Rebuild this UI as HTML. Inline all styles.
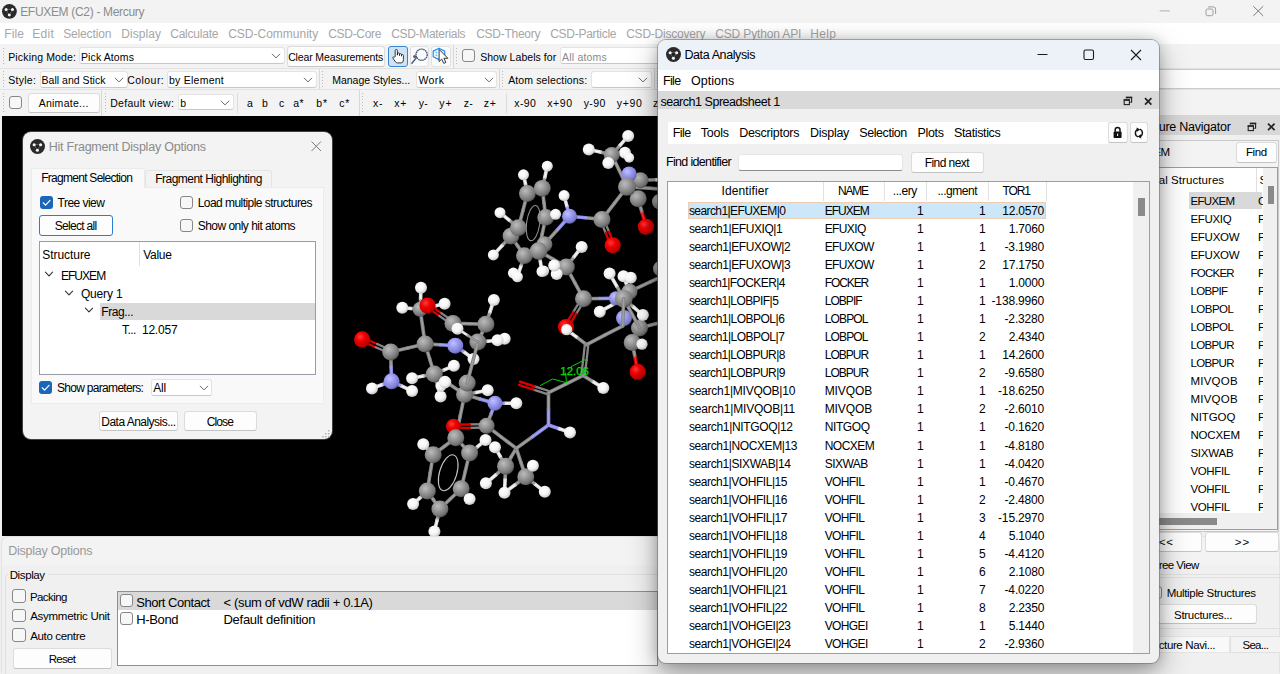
<!DOCTYPE html>
<html><head><meta charset="utf-8"><title>Mercury</title>
<style>
html,body{margin:0;padding:0;}
body{width:1280px;height:674px;overflow:hidden;position:relative;background:#f0f0f0;font-family:"Liberation Sans",sans-serif;font-size:12px;}
.a{position:absolute;}
.t{position:absolute;white-space:pre;line-height:16px;height:16px;}
svg{overflow:visible;}
</style></head><body>
<div class="a" style="left:0px;top:0px;width:1280px;height:23px;background:#f3f3f3;"></div>
<svg class="a" style="left:2.049999999999999px;top:3.8499999999999996px;" width="14.8" height="14.8" viewBox="0 0 14.8 14.8"><circle cx="7.4" cy="7.4" r="7.4" fill="#2a2a2a"/><path d="M4.10 5.60 L10.50 5.60 L7.30 11.10 Z" fill="#1c1c1c" stroke="#8a8a8a" stroke-width="0.55"/><circle cx="4.10" cy="5.60" r="1.50" fill="#f6f6f6"/><circle cx="10.50" cy="5.60" r="1.50" fill="#f6f6f6"/><circle cx="7.30" cy="11.10" r="1.50" fill="#f6f6f6"/></svg>
<span class="t" style="left:20.20px;top:4.00px;font-size:12px;letter-spacing:-0.317px;color:#8c8c8c;">EFUXEM (C2) - Mercury</span>
<svg class="a" style="left:1159px;top:0px;" width="110" height="20" viewBox="0 0 110 20"><path d="M0.7 10.9 H10.7" stroke="#b0b0b0" stroke-width="1" fill="none"/>
<rect x="47" y="9" width="7" height="6.7" rx="1.6" fill="none" stroke="#9c9c9c" stroke-width="1"/>
<path d="M49 6.9 H54.4 a2.2 2.2 0 0 1 2.2 2.2 V14" fill="none" stroke="#9c9c9c" stroke-width="1"/>
<path d="M94.3 6.2 L104.2 15.9 M104.2 6.2 L94.3 15.9" stroke="#7a7a7a" stroke-width="1" fill="none"/></svg>
<div class="a" style="left:0px;top:23px;width:1280px;height:21px;background:#ffffff;"></div>
<span class="t" style="left:4.20px;top:26.00px;font-size:12px;letter-spacing:0.166px;color:#a6a6a6;">File</span>
<span class="t" style="left:32.20px;top:26.00px;font-size:12px;letter-spacing:0.331px;color:#a6a6a6;">Edit</span>
<span class="t" style="left:63.20px;top:26.00px;font-size:12px;letter-spacing:-0.151px;color:#a6a6a6;">Selection</span>
<span class="t" style="left:121.20px;top:26.00px;font-size:12px;letter-spacing:0.094px;color:#a6a6a6;">Display</span>
<span class="t" style="left:170.20px;top:26.00px;font-size:12px;letter-spacing:-0.225px;color:#a6a6a6;">Calculate</span>
<span class="t" style="left:228.20px;top:26.00px;font-size:12px;letter-spacing:-0.001px;color:#a6a6a6;">CSD-Community</span>
<span class="t" style="left:328.20px;top:26.00px;font-size:12px;letter-spacing:-0.293px;color:#a6a6a6;">CSD-Core</span>
<span class="t" style="left:391.20px;top:26.00px;font-size:12px;letter-spacing:-0.308px;color:#a6a6a6;">CSD-Materials</span>
<span class="t" style="left:476.20px;top:26.00px;font-size:12px;letter-spacing:-0.268px;color:#a6a6a6;">CSD-Theory</span>
<span class="t" style="left:550.20px;top:26.00px;font-size:12px;letter-spacing:-0.279px;color:#a6a6a6;">CSD-Particle</span>
<span class="t" style="left:626.20px;top:26.00px;font-size:12px;letter-spacing:-0.231px;color:#a6a6a6;">CSD-Discovery</span>
<span class="t" style="left:715.20px;top:26.00px;font-size:12px;letter-spacing:-0.146px;color:#a6a6a6;">CSD Python API</span>
<span class="t" style="left:810.20px;top:26.00px;font-size:12px;letter-spacing:0.330px;color:#a6a6a6;">Help</span>
<div class="a" style="left:0px;top:44px;width:1280px;height:72px;background:#f3f3f3;"></div>
<div class="a" style="left:0px;top:68px;width:1280px;height:1px;background:#e2e2e2;"></div>
<div class="a" style="left:0px;top:89px;width:1280px;height:1px;background:#e2e2e2;"></div>
<div class="a" style="left:3px;top:48px;width:1px;height:17px;background:repeating-linear-gradient(to bottom,#b9b9b9 0,#b9b9b9 1px,transparent 1px,transparent 3px);"></div>
<span class="t" style="left:8.20px;top:49.00px;font-size:10.5px;letter-spacing:0.158px;color:#000;">Picking Mode:</span>
<div class="a" style="left:79px;top:47.3px;width:205.7px;height:16.3px;background:#fff;border:1px solid #e3e3e3;border-radius:3px;box-sizing:border-box;border-bottom-color:#c8c8c8;"></div>
<span class="t" style="left:81.00px;top:49.00px;font-size:10.5px;letter-spacing:0.107px;color:#000;">Pick Atoms</span>
<svg class="a" style="left:270.0px;top:50.949999999999996px;" width="12" height="10" viewBox="0 0 12 10"><path d="M2.2 3.1 L6 6.9 L9.8 3.1" fill="none" stroke="#666" stroke-width="1" stroke-linecap="round" stroke-linejoin="round"/></svg>
<div class="a" style="left:286.5px;top:45.5px;width:98.5px;height:21px;background:#fdfdfd;border:1px solid #dcdcdc;border-radius:3px;box-sizing:border-box;border-bottom-color:#c4c4c4;"></div>
<span class="t" style="left:288.18px;top:49.00px;font-size:10.5px;letter-spacing:-0.136px;color:#000;">Clear Measurements</span>
<div class="a" style="left:388px;top:46px;width:20px;height:21px;background:#cfe3f7;border:1px solid #3c86d0;border-radius:3px;box-sizing:border-box;"></div>
<svg class="a" style="left:388px;top:46px;" width="20" height="21" viewBox="0 0 20 21"><path transform="translate(0,-0.8)" d="M7.2 11.5 V5.4 a1.1 1.1 0 0 1 2.2 0 V10 V8.8 a1.05 1.05 0 0 1 2.1 0 V10.4 V9.5 a1 1 0 0 1 2 0 V11 V10.3 a0.95 0.95 0 0 1 1.9 0 V14.5 c0 2 -1 3.2 -2.4 3.2 H9.6 c-1.2 0 -2 -0.7 -2.7 -1.8 L4.9 12.9 c-0.5 -0.9 0.6 -1.7 1.3 -0.9 Z" fill="#ffffff" stroke="#222" stroke-width="0.9" stroke-linejoin="round"/></svg>
<div class="a" style="left:410px;top:46px;width:19px;height:21px;background:#fbfbfb;border:1px solid #e0e0e0;border-radius:3px;box-sizing:border-box;"></div>
<svg class="a" style="left:410px;top:46px;" width="19" height="21" viewBox="0 0 19 21"><circle cx="11.6" cy="8.7" r="5.6" fill="none" stroke="#4e5c7c" stroke-width="1.4" stroke-dasharray="1.6 0.5"/><path d="M6.6 11.4 L1.9 17.2" stroke="#4e5c7c" stroke-width="1.5" stroke-linecap="round"/><circle cx="4.6" cy="10.6" r="1.5" fill="#4e5c7c"/></svg>
<div class="a" style="left:431px;top:46px;width:20px;height:21px;background:#fbfbfb;border:1px solid #e0e0e0;border-radius:3px;box-sizing:border-box;"></div>
<svg class="a" style="left:431px;top:46px;" width="20" height="21" viewBox="0 0 20 21"><path d="M8 2.3 L13.7 5.1 V10.8 L8 13.6 L2.2 10.8 V5.1 Z" fill="#eef6fd" stroke="#1e8ffa" stroke-width="1.2" stroke-linejoin="round"/><path d="M4.6 6.4 h1.6 M4.6 9.2 h1.6" stroke="#1e8ffa" stroke-width="0.8"/><path d="M8.1 3.4 V15.6 L10.7 13.1 L12.8 17.4 L14.9 16.4 L12.9 12.3 L16.9 12.3 Z" fill="#fff" stroke="#222" stroke-width="0.9" stroke-linejoin="round"/></svg>
<div class="a" style="left:456px;top:48px;width:1px;height:17px;background:repeating-linear-gradient(to bottom,#b9b9b9 0,#b9b9b9 1px,transparent 1px,transparent 3px);"></div>
<div class="a" style="left:462px;top:49px;width:13px;height:13px;background:#f7f7f7;border:1px solid #878787;border-radius:3px;box-sizing:border-box;"></div>
<span class="t" style="left:480.20px;top:49.00px;font-size:10.5px;letter-spacing:0.047px;color:#000;">Show Labels for</span>
<div class="a" style="left:560px;top:47.3px;width:110px;height:16.3px;background:#fff;border:1px solid #e3e3e3;border-radius:3px;box-sizing:border-box;border-bottom-color:#c8c8c8;"></div>
<span class="t" style="left:562.00px;top:49.00px;font-size:10.5px;letter-spacing:0.202px;color:#8a8a8a;">All atoms</span>
<div class="a" style="left:3px;top:71px;width:1px;height:16px;background:repeating-linear-gradient(to bottom,#b9b9b9 0,#b9b9b9 1px,transparent 1px,transparent 3px);"></div>
<span class="t" style="left:8.20px;top:72.00px;font-size:10.5px;letter-spacing:0.290px;color:#000;">Style:</span>
<div class="a" style="left:39.5px;top:71.3px;width:88px;height:16.4px;background:#fff;border:1px solid #e3e3e3;border-radius:3px;box-sizing:border-box;border-bottom-color:#c8c8c8;"></div>
<span class="t" style="left:41.50px;top:72.00px;font-size:10.5px;letter-spacing:0.028px;color:#000;">Ball and Stick</span>
<svg class="a" style="left:112.8px;top:75.0px;" width="12" height="10" viewBox="0 0 12 10"><path d="M2.2 3.1 L6 6.9 L9.8 3.1" fill="none" stroke="#666" stroke-width="1" stroke-linecap="round" stroke-linejoin="round"/></svg>
<span class="t" style="left:127.20px;top:72.00px;font-size:10.5px;letter-spacing:0.451px;color:#000;">Colour:</span>
<div class="a" style="left:167px;top:71.3px;width:150px;height:16.4px;background:#fff;border:1px solid #e3e3e3;border-radius:3px;box-sizing:border-box;border-bottom-color:#c8c8c8;"></div>
<span class="t" style="left:169.00px;top:72.00px;font-size:10.5px;letter-spacing:0.248px;color:#000;">by Element</span>
<svg class="a" style="left:302.3px;top:75.0px;" width="12" height="10" viewBox="0 0 12 10"><path d="M2.2 3.1 L6 6.9 L9.8 3.1" fill="none" stroke="#666" stroke-width="1" stroke-linecap="round" stroke-linejoin="round"/></svg>
<div class="a" style="left:322px;top:71px;width:1px;height:16px;background:repeating-linear-gradient(to bottom,#b9b9b9 0,#b9b9b9 1px,transparent 1px,transparent 3px);"></div>
<span class="t" style="left:332.20px;top:72.00px;font-size:10.5px;letter-spacing:-0.013px;color:#000;">Manage Styles...</span>
<div class="a" style="left:416.4px;top:71.3px;width:81px;height:16.4px;background:#fff;border:1px solid #e3e3e3;border-radius:3px;box-sizing:border-box;border-bottom-color:#c8c8c8;"></div>
<span class="t" style="left:418.40px;top:72.00px;font-size:10.5px;letter-spacing:0.424px;color:#000;">Work</span>
<svg class="a" style="left:482.7px;top:75.0px;" width="12" height="10" viewBox="0 0 12 10"><path d="M2.2 3.1 L6 6.9 L9.8 3.1" fill="none" stroke="#666" stroke-width="1" stroke-linecap="round" stroke-linejoin="round"/></svg>
<div class="a" style="left:502px;top:71px;width:1px;height:16px;background:repeating-linear-gradient(to bottom,#b9b9b9 0,#b9b9b9 1px,transparent 1px,transparent 3px);"></div>
<span class="t" style="left:508.20px;top:72.00px;font-size:10.5px;letter-spacing:0.123px;color:#000;">Atom selections:</span>
<div class="a" style="left:591px;top:71.3px;width:60.5px;height:16.4px;background:#fff;border:1px solid #e3e3e3;border-radius:3px;box-sizing:border-box;border-bottom-color:#c8c8c8;"></div>
<svg class="a" style="left:636.8px;top:75.0px;" width="12" height="10" viewBox="0 0 12 10"><path d="M2.2 3.1 L6 6.9 L9.8 3.1" fill="none" stroke="#666" stroke-width="1" stroke-linecap="round" stroke-linejoin="round"/></svg>
<div class="a" style="left:657px;top:71px;width:1px;height:16px;background:repeating-linear-gradient(to bottom,#b9b9b9 0,#b9b9b9 1px,transparent 1px,transparent 3px);"></div>
<div class="a" style="left:3px;top:93px;width:1px;height:19px;background:repeating-linear-gradient(to bottom,#b9b9b9 0,#b9b9b9 1px,transparent 1px,transparent 3px);"></div>
<div class="a" style="left:9px;top:96px;width:13px;height:13px;background:#f7f7f7;border:1px solid #878787;border-radius:3px;box-sizing:border-box;"></div>
<div class="a" style="left:27.5px;top:93px;width:72px;height:20.2px;background:#fdfdfd;border:1px solid #dcdcdc;border-radius:3px;box-sizing:border-box;border-bottom-color:#c4c4c4;"></div>
<span class="t" style="left:38.64px;top:95.00px;font-size:10.5px;letter-spacing:0.273px;color:#000;">Animate...</span>
<div class="a" style="left:105px;top:93px;width:1px;height:19px;background:repeating-linear-gradient(to bottom,#b9b9b9 0,#b9b9b9 1px,transparent 1px,transparent 3px);"></div>
<span class="t" style="left:110.20px;top:95.00px;font-size:10.5px;letter-spacing:0.300px;color:#000;">Default view:</span>
<div class="a" style="left:177.5px;top:94.3px;width:56px;height:16.2px;background:#fff;border:1px solid #e3e3e3;border-radius:3px;box-sizing:border-box;border-bottom-color:#c8c8c8;"></div>
<span class="t" style="left:180.30px;top:95.00px;font-size:10.5px;letter-spacing:-0.100px;color:#000;">b</span>
<svg class="a" style="left:218.8px;top:97.89999999999999px;" width="12" height="10" viewBox="0 0 12 10"><path d="M2.2 3.1 L6 6.9 L9.8 3.1" fill="none" stroke="#666" stroke-width="1" stroke-linecap="round" stroke-linejoin="round"/></svg>
<div class="a" style="left:237px;top:93px;width:1px;height:20px;background:#dcdcdc;"></div>
<span class="t" style="left:247.00px;top:95.00px;font-size:10.5px;letter-spacing:-0.100px;color:#000;">a</span>
<span class="t" style="left:262.00px;top:95.00px;font-size:10.5px;letter-spacing:-0.100px;color:#000;">b</span>
<span class="t" style="left:279.00px;top:95.00px;font-size:10.5px;letter-spacing:-0.100px;color:#000;">c</span>
<span class="t" style="left:293.20px;top:95.00px;font-size:10.5px;letter-spacing:0.537px;color:#000;">a*</span>
<span class="t" style="left:316.20px;top:95.00px;font-size:10.5px;letter-spacing:1.037px;color:#000;">b*</span>
<span class="t" style="left:339.20px;top:95.00px;font-size:10.5px;letter-spacing:0.832px;color:#000;">c*</span>
<div class="a" style="left:362px;top:93px;width:1px;height:19px;background:repeating-linear-gradient(to bottom,#b9b9b9 0,#b9b9b9 1px,transparent 1px,transparent 3px);"></div>
<span class="t" style="left:372.90px;top:95.00px;font-size:10.5px;letter-spacing:0.777px;color:#000;">x-</span>
<span class="t" style="left:394.20px;top:95.00px;font-size:10.5px;letter-spacing:0.809px;color:#000;">x+</span>
<span class="t" style="left:418.70px;top:95.00px;font-size:10.5px;letter-spacing:0.377px;color:#000;">y-</span>
<span class="t" style="left:439.20px;top:95.00px;font-size:10.5px;letter-spacing:1.059px;color:#000;">y+</span>
<span class="t" style="left:463.70px;top:95.00px;font-size:10.5px;letter-spacing:0.377px;color:#000;">z-</span>
<span class="t" style="left:483.70px;top:95.00px;font-size:10.5px;letter-spacing:0.909px;color:#000;">z+</span>
<div class="a" style="left:506px;top:93px;width:1px;height:20px;background:#dcdcdc;"></div>
<span class="t" style="left:514.20px;top:95.00px;font-size:10.5px;letter-spacing:0.444px;color:#000;">x-90</span>
<span class="t" style="left:547.20px;top:95.00px;font-size:10.5px;letter-spacing:0.610px;color:#000;">x+90</span>
<span class="t" style="left:583.70px;top:95.00px;font-size:10.5px;letter-spacing:0.394px;color:#000;">y-90</span>
<span class="t" style="left:616.70px;top:95.00px;font-size:10.5px;letter-spacing:0.735px;color:#000;">y+90</span>
<span class="t" style="left:652.90px;top:95.00px;font-size:10.5px;letter-spacing:0.394px;color:#000;">z-90</span>
<div class="a" style="left:452.5px;top:45px;width:1px;height:23px;background:#d8d8d8;"></div>
<div class="a" style="left:318.5px;top:69px;width:1px;height:20px;background:#d8d8d8;"></div>
<div class="a" style="left:499px;top:69px;width:1px;height:20px;background:#d8d8d8;"></div>
<div class="a" style="left:653.5px;top:69px;width:1px;height:20px;background:#d8d8d8;"></div>
<div class="a" style="left:101.3px;top:90px;width:1px;height:26px;background:#d8d8d8;"></div>
<div class="a" style="left:359.3px;top:90px;width:1px;height:26px;background:#d8d8d8;"></div>
<div class="a" style="left:1.5px;top:116px;width:656px;height:420px;background:#000;"></div>
<svg class="a" style="left:0;top:0" width="1280" height="674" viewBox="0 0 1280 674"><defs>
<radialGradient id="gC" cx="38%" cy="34%" r="70%"><stop offset="0" stop-color="#bcbcbc"/><stop offset="0.4" stop-color="#999999"/><stop offset="0.82" stop-color="#727272"/><stop offset="1" stop-color="#484848"/></radialGradient>
<radialGradient id="gH" cx="40%" cy="36%" r="70%"><stop offset="0" stop-color="#ffffff"/><stop offset="0.55" stop-color="#f4f4f4"/><stop offset="0.85" stop-color="#d0d0d0"/><stop offset="1" stop-color="#a0a0a0"/></radialGradient>
<radialGradient id="gN" cx="38%" cy="34%" r="70%"><stop offset="0" stop-color="#c2c2ff"/><stop offset="0.4" stop-color="#9c9cf4"/><stop offset="0.85" stop-color="#7a7acc"/><stop offset="1" stop-color="#525290"/></radialGradient>
<radialGradient id="gO" cx="38%" cy="34%" r="70%"><stop offset="0" stop-color="#ff3a3a"/><stop offset="0.4" stop-color="#f00000"/><stop offset="0.85" stop-color="#c00000"/><stop offset="1" stop-color="#800000"/></radialGradient>
<clipPath id="vp"><rect x="2" y="116" width="655.5" height="420"/></clipPath>
</defs><g clip-path="url(#vp)"><g transform="translate(0,0.7)"><line x1="390.7" y1="351.2" x2="407.9" y2="347.2" stroke="#858585" stroke-width="3.6" stroke-linecap="round"/><line x1="407.9" y1="347.2" x2="425.1" y2="343.2" stroke="#858585" stroke-width="3.6" stroke-linecap="round"/><line x1="390.7" y1="351.2" x2="407.9" y2="347.2" stroke="#a2a2a2" stroke-width="1.368" stroke-linecap="round"/><line x1="407.9" y1="347.2" x2="425.1" y2="343.2" stroke="#a2a2a2" stroke-width="1.368" stroke-linecap="round"/><line x1="390.7" y1="351.2" x2="391.1" y2="365.9" stroke="#858585" stroke-width="3.6" stroke-linecap="round"/><line x1="391.1" y1="365.9" x2="391.6" y2="380.6" stroke="#8a8ae2" stroke-width="3.6" stroke-linecap="round"/><line x1="390.7" y1="351.2" x2="391.1" y2="365.9" stroke="#a2a2a2" stroke-width="1.368" stroke-linecap="round"/><line x1="391.1" y1="365.9" x2="391.6" y2="380.6" stroke="#a4a4f6" stroke-width="1.368" stroke-linecap="round"/><line x1="391.6" y1="380.6" x2="381.8" y2="384.1" stroke="#8a8ae2" stroke-width="3.6" stroke-linecap="round"/><line x1="381.8" y1="384.1" x2="372.0" y2="387.7" stroke="#dcdcdc" stroke-width="3.6" stroke-linecap="round"/><line x1="391.6" y1="380.6" x2="381.8" y2="384.1" stroke="#a4a4f6" stroke-width="1.368" stroke-linecap="round"/><line x1="381.8" y1="384.1" x2="372.0" y2="387.7" stroke="#f6f6f6" stroke-width="1.368" stroke-linecap="round"/><line x1="391.6" y1="380.6" x2="401.9" y2="385.5" stroke="#8a8ae2" stroke-width="3.6" stroke-linecap="round"/><line x1="401.9" y1="385.5" x2="412.1" y2="390.3" stroke="#dcdcdc" stroke-width="3.6" stroke-linecap="round"/><line x1="391.6" y1="380.6" x2="401.9" y2="385.5" stroke="#a4a4f6" stroke-width="1.368" stroke-linecap="round"/><line x1="401.9" y1="385.5" x2="412.1" y2="390.3" stroke="#f6f6f6" stroke-width="1.368" stroke-linecap="round"/><line x1="425.1" y1="343.2" x2="422.6" y2="325.9" stroke="#858585" stroke-width="3.6" stroke-linecap="round"/><line x1="422.6" y1="325.9" x2="420.1" y2="308.5" stroke="#858585" stroke-width="3.6" stroke-linecap="round"/><line x1="425.1" y1="343.2" x2="422.6" y2="325.9" stroke="#a2a2a2" stroke-width="1.368" stroke-linecap="round"/><line x1="422.6" y1="325.9" x2="420.1" y2="308.5" stroke="#a2a2a2" stroke-width="1.368" stroke-linecap="round"/><line x1="420.1" y1="308.5" x2="420.6" y2="297.8" stroke="#858585" stroke-width="3.6" stroke-linecap="round"/><line x1="420.6" y1="297.8" x2="421.0" y2="287.1" stroke="#dcdcdc" stroke-width="3.6" stroke-linecap="round"/><line x1="420.1" y1="308.5" x2="420.6" y2="297.8" stroke="#a2a2a2" stroke-width="1.368" stroke-linecap="round"/><line x1="420.6" y1="297.8" x2="421.0" y2="287.1" stroke="#f6f6f6" stroke-width="1.368" stroke-linecap="round"/><line x1="420.1" y1="308.5" x2="411.2" y2="307.8" stroke="#858585" stroke-width="3.6" stroke-linecap="round"/><line x1="411.2" y1="307.8" x2="402.3" y2="307.1" stroke="#dcdcdc" stroke-width="3.6" stroke-linecap="round"/><line x1="420.1" y1="308.5" x2="411.2" y2="307.8" stroke="#a2a2a2" stroke-width="1.368" stroke-linecap="round"/><line x1="411.2" y1="307.8" x2="402.3" y2="307.1" stroke="#f6f6f6" stroke-width="1.368" stroke-linecap="round"/><line x1="420.1" y1="308.5" x2="432.4" y2="305.8" stroke="#858585" stroke-width="3.6" stroke-linecap="round"/><line x1="432.4" y1="305.8" x2="444.6" y2="303.1" stroke="#dcdcdc" stroke-width="3.6" stroke-linecap="round"/><line x1="420.1" y1="308.5" x2="432.4" y2="305.8" stroke="#a2a2a2" stroke-width="1.368" stroke-linecap="round"/><line x1="432.4" y1="305.8" x2="444.6" y2="303.1" stroke="#f6f6f6" stroke-width="1.368" stroke-linecap="round"/><line x1="425.1" y1="343.2" x2="440.2" y2="344.1" stroke="#858585" stroke-width="3.6" stroke-linecap="round"/><line x1="440.2" y1="344.1" x2="455.3" y2="345.0" stroke="#8a8ae2" stroke-width="3.6" stroke-linecap="round"/><line x1="425.1" y1="343.2" x2="440.2" y2="344.1" stroke="#a2a2a2" stroke-width="1.368" stroke-linecap="round"/><line x1="440.2" y1="344.1" x2="455.3" y2="345.0" stroke="#a4a4f6" stroke-width="1.368" stroke-linecap="round"/><line x1="425.1" y1="343.2" x2="429.7" y2="358.3" stroke="#858585" stroke-width="3.6" stroke-linecap="round"/><line x1="429.7" y1="358.3" x2="434.3" y2="373.4" stroke="#858585" stroke-width="3.6" stroke-linecap="round"/><line x1="425.1" y1="343.2" x2="429.7" y2="358.3" stroke="#a2a2a2" stroke-width="1.368" stroke-linecap="round"/><line x1="429.7" y1="358.3" x2="434.3" y2="373.4" stroke="#a2a2a2" stroke-width="1.368" stroke-linecap="round"/><line x1="434.3" y1="373.4" x2="444.1" y2="369.2" stroke="#858585" stroke-width="3.6" stroke-linecap="round"/><line x1="444.1" y1="369.2" x2="453.9" y2="365.1" stroke="#dcdcdc" stroke-width="3.6" stroke-linecap="round"/><line x1="434.3" y1="373.4" x2="444.1" y2="369.2" stroke="#a2a2a2" stroke-width="1.368" stroke-linecap="round"/><line x1="444.1" y1="369.2" x2="453.9" y2="365.1" stroke="#f6f6f6" stroke-width="1.368" stroke-linecap="round"/><line x1="434.3" y1="373.4" x2="423.2" y2="375.4" stroke="#858585" stroke-width="3.6" stroke-linecap="round"/><line x1="423.2" y1="375.4" x2="412.1" y2="377.5" stroke="#dcdcdc" stroke-width="3.6" stroke-linecap="round"/><line x1="434.3" y1="373.4" x2="423.2" y2="375.4" stroke="#a2a2a2" stroke-width="1.368" stroke-linecap="round"/><line x1="423.2" y1="375.4" x2="412.1" y2="377.5" stroke="#f6f6f6" stroke-width="1.368" stroke-linecap="round"/><line x1="434.3" y1="373.4" x2="437.5" y2="384.5" stroke="#858585" stroke-width="3.6" stroke-linecap="round"/><line x1="437.5" y1="384.5" x2="440.6" y2="395.7" stroke="#dcdcdc" stroke-width="3.6" stroke-linecap="round"/><line x1="434.3" y1="373.4" x2="437.5" y2="384.5" stroke="#a2a2a2" stroke-width="1.368" stroke-linecap="round"/><line x1="437.5" y1="384.5" x2="440.6" y2="395.7" stroke="#f6f6f6" stroke-width="1.368" stroke-linecap="round"/><line x1="453.0" y1="322.7" x2="469.4" y2="323.1" stroke="#858585" stroke-width="3.6" stroke-linecap="round"/><line x1="469.4" y1="323.1" x2="485.9" y2="323.6" stroke="#858585" stroke-width="3.6" stroke-linecap="round"/><line x1="453.0" y1="322.7" x2="469.4" y2="323.1" stroke="#a2a2a2" stroke-width="1.368" stroke-linecap="round"/><line x1="469.4" y1="323.1" x2="485.9" y2="323.6" stroke="#a2a2a2" stroke-width="1.368" stroke-linecap="round"/><line x1="485.9" y1="323.6" x2="489.9" y2="311.4" stroke="#858585" stroke-width="3.6" stroke-linecap="round"/><line x1="489.9" y1="311.4" x2="493.9" y2="299.2" stroke="#dcdcdc" stroke-width="3.6" stroke-linecap="round"/><line x1="485.9" y1="323.6" x2="489.9" y2="311.4" stroke="#a2a2a2" stroke-width="1.368" stroke-linecap="round"/><line x1="489.9" y1="311.4" x2="493.9" y2="299.2" stroke="#f6f6f6" stroke-width="1.368" stroke-linecap="round"/><line x1="485.9" y1="323.6" x2="481.9" y2="332.5" stroke="#858585" stroke-width="3.6" stroke-linecap="round"/><line x1="481.9" y1="332.5" x2="477.9" y2="341.4" stroke="#858585" stroke-width="3.6" stroke-linecap="round"/><line x1="485.9" y1="323.6" x2="481.9" y2="332.5" stroke="#a2a2a2" stroke-width="1.368" stroke-linecap="round"/><line x1="481.9" y1="332.5" x2="477.9" y2="341.4" stroke="#a2a2a2" stroke-width="1.368" stroke-linecap="round"/><line x1="477.9" y1="341.4" x2="487.7" y2="340.5" stroke="#858585" stroke-width="3.6" stroke-linecap="round"/><line x1="487.7" y1="340.5" x2="497.5" y2="339.6" stroke="#dcdcdc" stroke-width="3.6" stroke-linecap="round"/><line x1="477.9" y1="341.4" x2="487.7" y2="340.5" stroke="#a2a2a2" stroke-width="1.368" stroke-linecap="round"/><line x1="487.7" y1="340.5" x2="497.5" y2="339.6" stroke="#f6f6f6" stroke-width="1.368" stroke-linecap="round"/><line x1="455.3" y1="345.0" x2="464.4" y2="351.6" stroke="#8a8ae2" stroke-width="3.6" stroke-linecap="round"/><line x1="464.4" y1="351.6" x2="473.5" y2="358.3" stroke="#dcdcdc" stroke-width="3.6" stroke-linecap="round"/><line x1="455.3" y1="345.0" x2="464.4" y2="351.6" stroke="#a4a4f6" stroke-width="1.368" stroke-linecap="round"/><line x1="464.4" y1="351.6" x2="473.5" y2="358.3" stroke="#f6f6f6" stroke-width="1.368" stroke-linecap="round"/><line x1="467.2" y1="382.3" x2="465.9" y2="388.1" stroke="#858585" stroke-width="3.6" stroke-linecap="round"/><line x1="465.9" y1="388.1" x2="464.6" y2="393.9" stroke="#858585" stroke-width="3.6" stroke-linecap="round"/><line x1="467.2" y1="382.3" x2="465.9" y2="388.1" stroke="#a2a2a2" stroke-width="1.368" stroke-linecap="round"/><line x1="465.9" y1="388.1" x2="464.6" y2="393.9" stroke="#a2a2a2" stroke-width="1.368" stroke-linecap="round"/><line x1="464.6" y1="393.9" x2="476.1" y2="391.7" stroke="#858585" stroke-width="3.6" stroke-linecap="round"/><line x1="476.1" y1="391.7" x2="487.7" y2="389.5" stroke="#dcdcdc" stroke-width="3.6" stroke-linecap="round"/><line x1="464.6" y1="393.9" x2="476.1" y2="391.7" stroke="#a2a2a2" stroke-width="1.368" stroke-linecap="round"/><line x1="476.1" y1="391.7" x2="487.7" y2="389.5" stroke="#f6f6f6" stroke-width="1.368" stroke-linecap="round"/><line x1="464.6" y1="393.9" x2="479.8" y2="398.2" stroke="#858585" stroke-width="3.6" stroke-linecap="round"/><line x1="479.8" y1="398.2" x2="495.0" y2="402.6" stroke="#8a8ae2" stroke-width="3.6" stroke-linecap="round"/><line x1="464.6" y1="393.9" x2="479.8" y2="398.2" stroke="#a2a2a2" stroke-width="1.368" stroke-linecap="round"/><line x1="479.8" y1="398.2" x2="495.0" y2="402.6" stroke="#a4a4f6" stroke-width="1.368" stroke-linecap="round"/><line x1="495.0" y1="402.6" x2="505.6" y2="402.6" stroke="#8a8ae2" stroke-width="3.6" stroke-linecap="round"/><line x1="505.6" y1="402.6" x2="516.3" y2="402.6" stroke="#dcdcdc" stroke-width="3.6" stroke-linecap="round"/><line x1="495.0" y1="402.6" x2="505.6" y2="402.6" stroke="#a4a4f6" stroke-width="1.368" stroke-linecap="round"/><line x1="505.6" y1="402.6" x2="516.3" y2="402.6" stroke="#f6f6f6" stroke-width="1.368" stroke-linecap="round"/><line x1="495.0" y1="402.6" x2="490.8" y2="413.9" stroke="#8a8ae2" stroke-width="3.6" stroke-linecap="round"/><line x1="490.8" y1="413.9" x2="486.6" y2="425.1" stroke="#858585" stroke-width="3.6" stroke-linecap="round"/><line x1="495.0" y1="402.6" x2="490.8" y2="413.9" stroke="#a4a4f6" stroke-width="1.368" stroke-linecap="round"/><line x1="490.8" y1="413.9" x2="486.6" y2="425.1" stroke="#a2a2a2" stroke-width="1.368" stroke-linecap="round"/><line x1="486.6" y1="425.1" x2="501.4" y2="436.4" stroke="#858585" stroke-width="3.6" stroke-linecap="round"/><line x1="501.4" y1="436.4" x2="516.3" y2="447.7" stroke="#858585" stroke-width="3.6" stroke-linecap="round"/><line x1="486.6" y1="425.1" x2="501.4" y2="436.4" stroke="#a2a2a2" stroke-width="1.368" stroke-linecap="round"/><line x1="501.4" y1="436.4" x2="516.3" y2="447.7" stroke="#a2a2a2" stroke-width="1.368" stroke-linecap="round"/><line x1="464.6" y1="393.9" x2="460.2" y2="415.4" stroke="#858585" stroke-width="3.6" stroke-linecap="round"/><line x1="460.2" y1="415.4" x2="455.8" y2="437.0" stroke="#858585" stroke-width="3.6" stroke-linecap="round"/><line x1="464.6" y1="393.9" x2="460.2" y2="415.4" stroke="#a2a2a2" stroke-width="1.368" stroke-linecap="round"/><line x1="460.2" y1="415.4" x2="455.8" y2="437.0" stroke="#a2a2a2" stroke-width="1.368" stroke-linecap="round"/><line x1="455.8" y1="437.0" x2="462.7" y2="444.7" stroke="#858585" stroke-width="3.6" stroke-linecap="round"/><line x1="462.7" y1="444.7" x2="469.6" y2="452.4" stroke="#858585" stroke-width="3.6" stroke-linecap="round"/><line x1="455.8" y1="437.0" x2="462.7" y2="444.7" stroke="#a2a2a2" stroke-width="1.368" stroke-linecap="round"/><line x1="462.7" y1="444.7" x2="469.6" y2="452.4" stroke="#a2a2a2" stroke-width="1.368" stroke-linecap="round"/><line x1="469.6" y1="452.4" x2="465.4" y2="470.2" stroke="#858585" stroke-width="3.6" stroke-linecap="round"/><line x1="465.4" y1="470.2" x2="461.2" y2="488.0" stroke="#858585" stroke-width="3.6" stroke-linecap="round"/><line x1="469.6" y1="452.4" x2="465.4" y2="470.2" stroke="#a2a2a2" stroke-width="1.368" stroke-linecap="round"/><line x1="465.4" y1="470.2" x2="461.2" y2="488.0" stroke="#a2a2a2" stroke-width="1.368" stroke-linecap="round"/><line x1="461.2" y1="488.0" x2="450.5" y2="498.1" stroke="#858585" stroke-width="3.6" stroke-linecap="round"/><line x1="450.5" y1="498.1" x2="439.9" y2="508.2" stroke="#858585" stroke-width="3.6" stroke-linecap="round"/><line x1="461.2" y1="488.0" x2="450.5" y2="498.1" stroke="#a2a2a2" stroke-width="1.368" stroke-linecap="round"/><line x1="450.5" y1="498.1" x2="439.9" y2="508.2" stroke="#a2a2a2" stroke-width="1.368" stroke-linecap="round"/><line x1="439.9" y1="508.2" x2="433.6" y2="499.3" stroke="#858585" stroke-width="3.6" stroke-linecap="round"/><line x1="433.6" y1="499.3" x2="427.3" y2="490.4" stroke="#858585" stroke-width="3.6" stroke-linecap="round"/><line x1="439.9" y1="508.2" x2="433.6" y2="499.3" stroke="#a2a2a2" stroke-width="1.368" stroke-linecap="round"/><line x1="433.6" y1="499.3" x2="427.3" y2="490.4" stroke="#a2a2a2" stroke-width="1.368" stroke-linecap="round"/><line x1="427.3" y1="490.4" x2="430.2" y2="472.2" stroke="#858585" stroke-width="3.6" stroke-linecap="round"/><line x1="430.2" y1="472.2" x2="433.2" y2="454.1" stroke="#858585" stroke-width="3.6" stroke-linecap="round"/><line x1="427.3" y1="490.4" x2="430.2" y2="472.2" stroke="#a2a2a2" stroke-width="1.368" stroke-linecap="round"/><line x1="430.2" y1="472.2" x2="433.2" y2="454.1" stroke="#a2a2a2" stroke-width="1.368" stroke-linecap="round"/><line x1="433.2" y1="454.1" x2="444.5" y2="445.6" stroke="#858585" stroke-width="3.6" stroke-linecap="round"/><line x1="444.5" y1="445.6" x2="455.8" y2="437.0" stroke="#858585" stroke-width="3.6" stroke-linecap="round"/><line x1="433.2" y1="454.1" x2="444.5" y2="445.6" stroke="#a2a2a2" stroke-width="1.368" stroke-linecap="round"/><line x1="444.5" y1="445.6" x2="455.8" y2="437.0" stroke="#a2a2a2" stroke-width="1.368" stroke-linecap="round"/><line x1="469.6" y1="452.4" x2="477.6" y2="445.9" stroke="#858585" stroke-width="3.6" stroke-linecap="round"/><line x1="477.6" y1="445.9" x2="485.5" y2="439.3" stroke="#dcdcdc" stroke-width="3.6" stroke-linecap="round"/><line x1="469.6" y1="452.4" x2="477.6" y2="445.9" stroke="#a2a2a2" stroke-width="1.368" stroke-linecap="round"/><line x1="477.6" y1="445.9" x2="485.5" y2="439.3" stroke="#f6f6f6" stroke-width="1.368" stroke-linecap="round"/><line x1="433.2" y1="454.1" x2="428.2" y2="448.9" stroke="#858585" stroke-width="3.6" stroke-linecap="round"/><line x1="428.2" y1="448.9" x2="423.3" y2="443.6" stroke="#dcdcdc" stroke-width="3.6" stroke-linecap="round"/><line x1="433.2" y1="454.1" x2="428.2" y2="448.9" stroke="#a2a2a2" stroke-width="1.368" stroke-linecap="round"/><line x1="428.2" y1="448.9" x2="423.3" y2="443.6" stroke="#f6f6f6" stroke-width="1.368" stroke-linecap="round"/><line x1="461.2" y1="488.0" x2="465.4" y2="493.1" stroke="#858585" stroke-width="3.6" stroke-linecap="round"/><line x1="465.4" y1="493.1" x2="469.6" y2="498.2" stroke="#dcdcdc" stroke-width="3.6" stroke-linecap="round"/><line x1="461.2" y1="488.0" x2="465.4" y2="493.1" stroke="#a2a2a2" stroke-width="1.368" stroke-linecap="round"/><line x1="465.4" y1="493.1" x2="469.6" y2="498.2" stroke="#f6f6f6" stroke-width="1.368" stroke-linecap="round"/><line x1="427.3" y1="490.4" x2="420.2" y2="496.9" stroke="#858585" stroke-width="3.6" stroke-linecap="round"/><line x1="420.2" y1="496.9" x2="413.1" y2="503.4" stroke="#dcdcdc" stroke-width="3.6" stroke-linecap="round"/><line x1="427.3" y1="490.4" x2="420.2" y2="496.9" stroke="#a2a2a2" stroke-width="1.368" stroke-linecap="round"/><line x1="420.2" y1="496.9" x2="413.1" y2="503.4" stroke="#f6f6f6" stroke-width="1.368" stroke-linecap="round"/><line x1="439.9" y1="508.2" x2="437.1" y2="519.5" stroke="#858585" stroke-width="3.6" stroke-linecap="round"/><line x1="437.1" y1="519.5" x2="434.4" y2="530.7" stroke="#dcdcdc" stroke-width="3.6" stroke-linecap="round"/><line x1="439.9" y1="508.2" x2="437.1" y2="519.5" stroke="#a2a2a2" stroke-width="1.368" stroke-linecap="round"/><line x1="437.1" y1="519.5" x2="434.4" y2="530.7" stroke="#f6f6f6" stroke-width="1.368" stroke-linecap="round"/><line x1="516.3" y1="447.7" x2="510.9" y2="456.6" stroke="#858585" stroke-width="3.6" stroke-linecap="round"/><line x1="510.9" y1="456.6" x2="505.6" y2="465.5" stroke="#858585" stroke-width="3.6" stroke-linecap="round"/><line x1="516.3" y1="447.7" x2="510.9" y2="456.6" stroke="#a2a2a2" stroke-width="1.368" stroke-linecap="round"/><line x1="510.9" y1="456.6" x2="505.6" y2="465.5" stroke="#a2a2a2" stroke-width="1.368" stroke-linecap="round"/><line x1="516.3" y1="447.7" x2="521.0" y2="461.9" stroke="#858585" stroke-width="3.6" stroke-linecap="round"/><line x1="521.0" y1="461.9" x2="525.8" y2="476.1" stroke="#858585" stroke-width="3.6" stroke-linecap="round"/><line x1="516.3" y1="447.7" x2="521.0" y2="461.9" stroke="#a2a2a2" stroke-width="1.368" stroke-linecap="round"/><line x1="521.0" y1="461.9" x2="525.8" y2="476.1" stroke="#a2a2a2" stroke-width="1.368" stroke-linecap="round"/><line x1="505.6" y1="465.5" x2="500.3" y2="456.0" stroke="#858585" stroke-width="3.6" stroke-linecap="round"/><line x1="500.3" y1="456.0" x2="495.0" y2="446.5" stroke="#dcdcdc" stroke-width="3.6" stroke-linecap="round"/><line x1="505.6" y1="465.5" x2="500.3" y2="456.0" stroke="#a2a2a2" stroke-width="1.368" stroke-linecap="round"/><line x1="500.3" y1="456.0" x2="495.0" y2="446.5" stroke="#f6f6f6" stroke-width="1.368" stroke-linecap="round"/><line x1="505.6" y1="465.5" x2="495.8" y2="474.1" stroke="#858585" stroke-width="3.6" stroke-linecap="round"/><line x1="495.8" y1="474.1" x2="485.9" y2="482.6" stroke="#dcdcdc" stroke-width="3.6" stroke-linecap="round"/><line x1="505.6" y1="465.5" x2="495.8" y2="474.1" stroke="#a2a2a2" stroke-width="1.368" stroke-linecap="round"/><line x1="495.8" y1="474.1" x2="485.9" y2="482.6" stroke="#f6f6f6" stroke-width="1.368" stroke-linecap="round"/><line x1="505.6" y1="465.5" x2="505.1" y2="478.8" stroke="#858585" stroke-width="3.6" stroke-linecap="round"/><line x1="505.1" y1="478.8" x2="504.5" y2="492.0" stroke="#dcdcdc" stroke-width="3.6" stroke-linecap="round"/><line x1="505.6" y1="465.5" x2="505.1" y2="478.8" stroke="#a2a2a2" stroke-width="1.368" stroke-linecap="round"/><line x1="505.1" y1="478.8" x2="504.5" y2="492.0" stroke="#f6f6f6" stroke-width="1.368" stroke-linecap="round"/><line x1="525.8" y1="476.1" x2="515.1" y2="484.1" stroke="#858585" stroke-width="3.6" stroke-linecap="round"/><line x1="515.1" y1="484.1" x2="504.5" y2="492.0" stroke="#dcdcdc" stroke-width="3.6" stroke-linecap="round"/><line x1="525.8" y1="476.1" x2="515.1" y2="484.1" stroke="#a2a2a2" stroke-width="1.368" stroke-linecap="round"/><line x1="515.1" y1="484.1" x2="504.5" y2="492.0" stroke="#f6f6f6" stroke-width="1.368" stroke-linecap="round"/><line x1="525.8" y1="476.1" x2="529.3" y2="470.6" stroke="#858585" stroke-width="3.6" stroke-linecap="round"/><line x1="529.3" y1="470.6" x2="532.9" y2="465.0" stroke="#dcdcdc" stroke-width="3.6" stroke-linecap="round"/><line x1="525.8" y1="476.1" x2="529.3" y2="470.6" stroke="#a2a2a2" stroke-width="1.368" stroke-linecap="round"/><line x1="529.3" y1="470.6" x2="532.9" y2="465.0" stroke="#f6f6f6" stroke-width="1.368" stroke-linecap="round"/><line x1="525.8" y1="476.1" x2="535.3" y2="483.6" stroke="#858585" stroke-width="3.6" stroke-linecap="round"/><line x1="535.3" y1="483.6" x2="544.8" y2="491.1" stroke="#dcdcdc" stroke-width="3.6" stroke-linecap="round"/><line x1="525.8" y1="476.1" x2="535.3" y2="483.6" stroke="#a2a2a2" stroke-width="1.368" stroke-linecap="round"/><line x1="535.3" y1="483.6" x2="544.8" y2="491.1" stroke="#f6f6f6" stroke-width="1.368" stroke-linecap="round"/><line x1="516.3" y1="447.7" x2="532.4" y2="436.0" stroke="#858585" stroke-width="3.6" stroke-linecap="round"/><line x1="532.4" y1="436.0" x2="548.5" y2="424.3" stroke="#8a8ae2" stroke-width="3.6" stroke-linecap="round"/><line x1="516.3" y1="447.7" x2="532.4" y2="436.0" stroke="#a2a2a2" stroke-width="1.368" stroke-linecap="round"/><line x1="532.4" y1="436.0" x2="548.5" y2="424.3" stroke="#a4a4f6" stroke-width="1.368" stroke-linecap="round"/><line x1="548.5" y1="424.3" x2="559.2" y2="428.0" stroke="#8a8ae2" stroke-width="3.6" stroke-linecap="round"/><line x1="559.2" y1="428.0" x2="570.0" y2="431.7" stroke="#dcdcdc" stroke-width="3.6" stroke-linecap="round"/><line x1="548.5" y1="424.3" x2="559.2" y2="428.0" stroke="#a4a4f6" stroke-width="1.368" stroke-linecap="round"/><line x1="559.2" y1="428.0" x2="570.0" y2="431.7" stroke="#f6f6f6" stroke-width="1.368" stroke-linecap="round"/><line x1="548.5" y1="424.3" x2="548.5" y2="408.1" stroke="#8a8ae2" stroke-width="3.6" stroke-linecap="round"/><line x1="548.5" y1="408.1" x2="548.5" y2="392.0" stroke="#858585" stroke-width="3.6" stroke-linecap="round"/><line x1="548.5" y1="424.3" x2="548.5" y2="408.1" stroke="#a4a4f6" stroke-width="1.368" stroke-linecap="round"/><line x1="548.5" y1="408.1" x2="548.5" y2="392.0" stroke="#a2a2a2" stroke-width="1.368" stroke-linecap="round"/><line x1="548.5" y1="392.0" x2="565.8" y2="383.4" stroke="#858585" stroke-width="3.6" stroke-linecap="round"/><line x1="565.8" y1="383.4" x2="583.1" y2="374.8" stroke="#858585" stroke-width="3.6" stroke-linecap="round"/><line x1="548.5" y1="392.0" x2="565.8" y2="383.4" stroke="#a2a2a2" stroke-width="1.368" stroke-linecap="round"/><line x1="565.8" y1="383.4" x2="583.1" y2="374.8" stroke="#a2a2a2" stroke-width="1.368" stroke-linecap="round"/><line x1="583.1" y1="374.8" x2="593.2" y2="381.1" stroke="#858585" stroke-width="3.6" stroke-linecap="round"/><line x1="593.2" y1="381.1" x2="603.3" y2="387.4" stroke="#dcdcdc" stroke-width="3.6" stroke-linecap="round"/><line x1="583.1" y1="374.8" x2="593.2" y2="381.1" stroke="#a2a2a2" stroke-width="1.368" stroke-linecap="round"/><line x1="593.2" y1="381.1" x2="603.3" y2="387.4" stroke="#f6f6f6" stroke-width="1.368" stroke-linecap="round"/><line x1="586.6" y1="343.9" x2="576.7" y2="336.4" stroke="#858585" stroke-width="3.6" stroke-linecap="round"/><line x1="576.7" y1="336.4" x2="566.7" y2="329.0" stroke="#dcdcdc" stroke-width="3.6" stroke-linecap="round"/><line x1="586.6" y1="343.9" x2="576.7" y2="336.4" stroke="#a2a2a2" stroke-width="1.368" stroke-linecap="round"/><line x1="576.7" y1="336.4" x2="566.7" y2="329.0" stroke="#f6f6f6" stroke-width="1.368" stroke-linecap="round"/><line x1="586.6" y1="343.9" x2="604.7" y2="334.5" stroke="#858585" stroke-width="3.6" stroke-linecap="round"/><line x1="604.7" y1="334.5" x2="622.8" y2="325.2" stroke="#858585" stroke-width="3.6" stroke-linecap="round"/><line x1="586.6" y1="343.9" x2="604.7" y2="334.5" stroke="#a2a2a2" stroke-width="1.368" stroke-linecap="round"/><line x1="604.7" y1="334.5" x2="622.8" y2="325.2" stroke="#a2a2a2" stroke-width="1.368" stroke-linecap="round"/><line x1="434.3" y1="373.4" x2="449.5" y2="383.6" stroke="#858585" stroke-width="3.6" stroke-linecap="round"/><line x1="449.5" y1="383.6" x2="464.6" y2="393.9" stroke="#858585" stroke-width="3.6" stroke-linecap="round"/><line x1="434.3" y1="373.4" x2="449.5" y2="383.6" stroke="#a2a2a2" stroke-width="1.368" stroke-linecap="round"/><line x1="449.5" y1="383.6" x2="464.6" y2="393.9" stroke="#a2a2a2" stroke-width="1.368" stroke-linecap="round"/><line x1="361.5" y1="340.3" x2="375.7" y2="346.6" stroke="#dc0000" stroke-width="2.3" stroke-linecap="round"/><line x1="375.7" y1="346.6" x2="390.0" y2="352.8" stroke="#858585" stroke-width="2.3" stroke-linecap="round"/><line x1="362.9" y1="337.1" x2="377.2" y2="343.3" stroke="#dc0000" stroke-width="2.3" stroke-linecap="round"/><line x1="377.2" y1="343.3" x2="391.4" y2="349.6" stroke="#858585" stroke-width="2.3" stroke-linecap="round"/><line x1="426.6" y1="306.3" x2="439.3" y2="315.2" stroke="#dc0000" stroke-width="2.3" stroke-linecap="round"/><line x1="439.3" y1="315.2" x2="452.0" y2="324.1" stroke="#858585" stroke-width="2.3" stroke-linecap="round"/><line x1="428.6" y1="303.5" x2="441.3" y2="312.4" stroke="#dc0000" stroke-width="2.3" stroke-linecap="round"/><line x1="441.3" y1="312.4" x2="454.0" y2="321.3" stroke="#858585" stroke-width="2.3" stroke-linecap="round"/><line x1="486.6" y1="423.4" x2="470.0" y2="423.6" stroke="#858585" stroke-width="2.3" stroke-linecap="round"/><line x1="470.0" y1="423.6" x2="453.4" y2="423.9" stroke="#dc0000" stroke-width="2.3" stroke-linecap="round"/><line x1="486.6" y1="426.8" x2="470.0" y2="427.1" stroke="#858585" stroke-width="2.3" stroke-linecap="round"/><line x1="470.0" y1="427.1" x2="453.4" y2="427.3" stroke="#dc0000" stroke-width="2.3" stroke-linecap="round"/><line x1="549.0" y1="390.3" x2="534.5" y2="385.6" stroke="#858585" stroke-width="2.3" stroke-linecap="round"/><line x1="534.5" y1="385.6" x2="520.0" y2="380.9" stroke="#dc0000" stroke-width="2.3" stroke-linecap="round"/><line x1="548.0" y1="393.7" x2="533.5" y2="389.0" stroke="#858585" stroke-width="2.3" stroke-linecap="round"/><line x1="533.5" y1="389.0" x2="519.0" y2="384.3" stroke="#dc0000" stroke-width="2.3" stroke-linecap="round"/><line x1="584.8" y1="375.0" x2="586.6" y2="359.5" stroke="#858585" stroke-width="2.3" stroke-linecap="round"/><line x1="586.6" y1="359.5" x2="588.3" y2="344.1" stroke="#858585" stroke-width="2.3" stroke-linecap="round"/><line x1="581.4" y1="374.6" x2="583.1" y2="359.2" stroke="#858585" stroke-width="2.3" stroke-linecap="round"/><line x1="583.1" y1="359.2" x2="584.9" y2="343.7" stroke="#858585" stroke-width="2.3" stroke-linecap="round"/><line x1="611.8" y1="154.2" x2="620.0" y2="144.7" stroke="#858585" stroke-width="3.6" stroke-linecap="round"/><line x1="620.0" y1="144.7" x2="628.2" y2="135.2" stroke="#dcdcdc" stroke-width="3.6" stroke-linecap="round"/><line x1="611.8" y1="154.2" x2="620.0" y2="144.7" stroke="#a2a2a2" stroke-width="1.368" stroke-linecap="round"/><line x1="620.0" y1="144.7" x2="628.2" y2="135.2" stroke="#f6f6f6" stroke-width="1.368" stroke-linecap="round"/><line x1="611.8" y1="154.2" x2="600.3" y2="151.4" stroke="#858585" stroke-width="3.6" stroke-linecap="round"/><line x1="600.3" y1="151.4" x2="588.8" y2="148.7" stroke="#dcdcdc" stroke-width="3.6" stroke-linecap="round"/><line x1="611.8" y1="154.2" x2="600.3" y2="151.4" stroke="#a2a2a2" stroke-width="1.368" stroke-linecap="round"/><line x1="600.3" y1="151.4" x2="588.8" y2="148.7" stroke="#f6f6f6" stroke-width="1.368" stroke-linecap="round"/><line x1="611.8" y1="154.2" x2="610.0" y2="158.3" stroke="#858585" stroke-width="3.6" stroke-linecap="round"/><line x1="610.0" y1="158.3" x2="608.3" y2="162.4" stroke="#dcdcdc" stroke-width="3.6" stroke-linecap="round"/><line x1="611.8" y1="154.2" x2="610.0" y2="158.3" stroke="#a2a2a2" stroke-width="1.368" stroke-linecap="round"/><line x1="610.0" y1="158.3" x2="608.3" y2="162.4" stroke="#f6f6f6" stroke-width="1.368" stroke-linecap="round"/><line x1="611.8" y1="154.2" x2="619.4" y2="170.1" stroke="#858585" stroke-width="3.6" stroke-linecap="round"/><line x1="619.4" y1="170.1" x2="627.0" y2="186.1" stroke="#858585" stroke-width="3.6" stroke-linecap="round"/><line x1="611.8" y1="154.2" x2="619.4" y2="170.1" stroke="#a2a2a2" stroke-width="1.368" stroke-linecap="round"/><line x1="619.4" y1="170.1" x2="627.0" y2="186.1" stroke="#a2a2a2" stroke-width="1.368" stroke-linecap="round"/><line x1="611.8" y1="154.2" x2="618.4" y2="153.1" stroke="#858585" stroke-width="3.6" stroke-linecap="round"/><line x1="618.4" y1="153.1" x2="625.0" y2="152.0" stroke="#dcdcdc" stroke-width="3.6" stroke-linecap="round"/><line x1="611.8" y1="154.2" x2="618.4" y2="153.1" stroke="#a2a2a2" stroke-width="1.368" stroke-linecap="round"/><line x1="618.4" y1="153.1" x2="625.0" y2="152.0" stroke="#f6f6f6" stroke-width="1.368" stroke-linecap="round"/><line x1="629.1" y1="173.2" x2="628.0" y2="179.6" stroke="#8a8ae2" stroke-width="3.6" stroke-linecap="round"/><line x1="628.0" y1="179.6" x2="627.0" y2="186.1" stroke="#858585" stroke-width="3.6" stroke-linecap="round"/><line x1="629.1" y1="173.2" x2="628.0" y2="179.6" stroke="#a4a4f6" stroke-width="1.368" stroke-linecap="round"/><line x1="628.0" y1="179.6" x2="627.0" y2="186.1" stroke="#a2a2a2" stroke-width="1.368" stroke-linecap="round"/><line x1="627.0" y1="186.1" x2="614.5" y2="202.4" stroke="#858585" stroke-width="3.6" stroke-linecap="round"/><line x1="614.5" y1="202.4" x2="602.0" y2="218.7" stroke="#858585" stroke-width="3.6" stroke-linecap="round"/><line x1="627.0" y1="186.1" x2="614.5" y2="202.4" stroke="#a2a2a2" stroke-width="1.368" stroke-linecap="round"/><line x1="614.5" y1="202.4" x2="602.0" y2="218.7" stroke="#a2a2a2" stroke-width="1.368" stroke-linecap="round"/><line x1="602.0" y1="218.7" x2="585.8" y2="217.1" stroke="#858585" stroke-width="3.6" stroke-linecap="round"/><line x1="585.8" y1="217.1" x2="569.5" y2="215.5" stroke="#8a8ae2" stroke-width="3.6" stroke-linecap="round"/><line x1="602.0" y1="218.7" x2="585.8" y2="217.1" stroke="#a2a2a2" stroke-width="1.368" stroke-linecap="round"/><line x1="585.8" y1="217.1" x2="569.5" y2="215.5" stroke="#a4a4f6" stroke-width="1.368" stroke-linecap="round"/><line x1="569.5" y1="215.5" x2="566.8" y2="205.2" stroke="#8a8ae2" stroke-width="3.6" stroke-linecap="round"/><line x1="566.8" y1="205.2" x2="564.1" y2="194.9" stroke="#dcdcdc" stroke-width="3.6" stroke-linecap="round"/><line x1="569.5" y1="215.5" x2="566.8" y2="205.2" stroke="#a4a4f6" stroke-width="1.368" stroke-linecap="round"/><line x1="566.8" y1="205.2" x2="564.1" y2="194.9" stroke="#f6f6f6" stroke-width="1.368" stroke-linecap="round"/><line x1="569.5" y1="215.5" x2="557.0" y2="229.6" stroke="#8a8ae2" stroke-width="3.6" stroke-linecap="round"/><line x1="557.0" y1="229.6" x2="544.4" y2="243.6" stroke="#858585" stroke-width="3.6" stroke-linecap="round"/><line x1="569.5" y1="215.5" x2="557.0" y2="229.6" stroke="#a4a4f6" stroke-width="1.368" stroke-linecap="round"/><line x1="557.0" y1="229.6" x2="544.4" y2="243.6" stroke="#a2a2a2" stroke-width="1.368" stroke-linecap="round"/><line x1="538.6" y1="250.2" x2="552.5" y2="258.2" stroke="#858585" stroke-width="3.6" stroke-linecap="round"/><line x1="552.5" y1="258.2" x2="566.3" y2="266.2" stroke="#858585" stroke-width="3.6" stroke-linecap="round"/><line x1="538.6" y1="250.2" x2="552.5" y2="258.2" stroke="#a2a2a2" stroke-width="1.368" stroke-linecap="round"/><line x1="552.5" y1="258.2" x2="566.3" y2="266.2" stroke="#a2a2a2" stroke-width="1.368" stroke-linecap="round"/><line x1="542.3" y1="187.6" x2="534.8" y2="190.2" stroke="#858585" stroke-width="3.6" stroke-linecap="round"/><line x1="534.8" y1="190.2" x2="527.4" y2="192.8" stroke="#858585" stroke-width="3.6" stroke-linecap="round"/><line x1="542.3" y1="187.6" x2="534.8" y2="190.2" stroke="#a2a2a2" stroke-width="1.368" stroke-linecap="round"/><line x1="534.8" y1="190.2" x2="527.4" y2="192.8" stroke="#a2a2a2" stroke-width="1.368" stroke-linecap="round"/><line x1="542.3" y1="187.6" x2="544.0" y2="202.1" stroke="#858585" stroke-width="3.6" stroke-linecap="round"/><line x1="544.0" y1="202.1" x2="545.7" y2="216.7" stroke="#858585" stroke-width="3.6" stroke-linecap="round"/><line x1="542.3" y1="187.6" x2="544.0" y2="202.1" stroke="#a2a2a2" stroke-width="1.368" stroke-linecap="round"/><line x1="544.0" y1="202.1" x2="545.7" y2="216.7" stroke="#a2a2a2" stroke-width="1.368" stroke-linecap="round"/><line x1="527.4" y1="192.8" x2="522.9" y2="209.9" stroke="#858585" stroke-width="3.6" stroke-linecap="round"/><line x1="522.9" y1="209.9" x2="518.4" y2="227.0" stroke="#858585" stroke-width="3.6" stroke-linecap="round"/><line x1="527.4" y1="192.8" x2="522.9" y2="209.9" stroke="#a2a2a2" stroke-width="1.368" stroke-linecap="round"/><line x1="522.9" y1="209.9" x2="518.4" y2="227.0" stroke="#a2a2a2" stroke-width="1.368" stroke-linecap="round"/><line x1="518.4" y1="227.0" x2="514.7" y2="231.2" stroke="#858585" stroke-width="3.6" stroke-linecap="round"/><line x1="514.7" y1="231.2" x2="511.0" y2="235.3" stroke="#858585" stroke-width="3.6" stroke-linecap="round"/><line x1="518.4" y1="227.0" x2="514.7" y2="231.2" stroke="#a2a2a2" stroke-width="1.368" stroke-linecap="round"/><line x1="514.7" y1="231.2" x2="511.0" y2="235.3" stroke="#a2a2a2" stroke-width="1.368" stroke-linecap="round"/><line x1="545.7" y1="216.7" x2="542.2" y2="233.4" stroke="#858585" stroke-width="3.6" stroke-linecap="round"/><line x1="542.2" y1="233.4" x2="538.6" y2="250.2" stroke="#858585" stroke-width="3.6" stroke-linecap="round"/><line x1="545.7" y1="216.7" x2="542.2" y2="233.4" stroke="#a2a2a2" stroke-width="1.368" stroke-linecap="round"/><line x1="542.2" y1="233.4" x2="538.6" y2="250.2" stroke="#a2a2a2" stroke-width="1.368" stroke-linecap="round"/><line x1="511.0" y1="235.3" x2="517.7" y2="245.2" stroke="#858585" stroke-width="3.6" stroke-linecap="round"/><line x1="517.7" y1="245.2" x2="524.4" y2="255.0" stroke="#858585" stroke-width="3.6" stroke-linecap="round"/><line x1="511.0" y1="235.3" x2="517.7" y2="245.2" stroke="#a2a2a2" stroke-width="1.368" stroke-linecap="round"/><line x1="517.7" y1="245.2" x2="524.4" y2="255.0" stroke="#a2a2a2" stroke-width="1.368" stroke-linecap="round"/><line x1="538.6" y1="250.2" x2="531.5" y2="252.6" stroke="#858585" stroke-width="3.6" stroke-linecap="round"/><line x1="531.5" y1="252.6" x2="524.4" y2="255.0" stroke="#858585" stroke-width="3.6" stroke-linecap="round"/><line x1="538.6" y1="250.2" x2="531.5" y2="252.6" stroke="#a2a2a2" stroke-width="1.368" stroke-linecap="round"/><line x1="531.5" y1="252.6" x2="524.4" y2="255.0" stroke="#a2a2a2" stroke-width="1.368" stroke-linecap="round"/><line x1="542.3" y1="187.6" x2="544.8" y2="176.6" stroke="#858585" stroke-width="3.6" stroke-linecap="round"/><line x1="544.8" y1="176.6" x2="547.3" y2="165.5" stroke="#dcdcdc" stroke-width="3.6" stroke-linecap="round"/><line x1="542.3" y1="187.6" x2="544.8" y2="176.6" stroke="#a2a2a2" stroke-width="1.368" stroke-linecap="round"/><line x1="544.8" y1="176.6" x2="547.3" y2="165.5" stroke="#f6f6f6" stroke-width="1.368" stroke-linecap="round"/><line x1="527.4" y1="192.8" x2="525.5" y2="183.4" stroke="#858585" stroke-width="3.6" stroke-linecap="round"/><line x1="525.5" y1="183.4" x2="523.5" y2="174.1" stroke="#dcdcdc" stroke-width="3.6" stroke-linecap="round"/><line x1="527.4" y1="192.8" x2="525.5" y2="183.4" stroke="#a2a2a2" stroke-width="1.368" stroke-linecap="round"/><line x1="525.5" y1="183.4" x2="523.5" y2="174.1" stroke="#f6f6f6" stroke-width="1.368" stroke-linecap="round"/><line x1="518.4" y1="227.0" x2="509.2" y2="219.5" stroke="#858585" stroke-width="3.6" stroke-linecap="round"/><line x1="509.2" y1="219.5" x2="500.0" y2="212.0" stroke="#dcdcdc" stroke-width="3.6" stroke-linecap="round"/><line x1="518.4" y1="227.0" x2="509.2" y2="219.5" stroke="#a2a2a2" stroke-width="1.368" stroke-linecap="round"/><line x1="509.2" y1="219.5" x2="500.0" y2="212.0" stroke="#f6f6f6" stroke-width="1.368" stroke-linecap="round"/><line x1="511.0" y1="235.3" x2="502.2" y2="244.8" stroke="#858585" stroke-width="3.6" stroke-linecap="round"/><line x1="502.2" y1="244.8" x2="493.4" y2="254.2" stroke="#dcdcdc" stroke-width="3.6" stroke-linecap="round"/><line x1="511.0" y1="235.3" x2="502.2" y2="244.8" stroke="#a2a2a2" stroke-width="1.368" stroke-linecap="round"/><line x1="502.2" y1="244.8" x2="493.4" y2="254.2" stroke="#f6f6f6" stroke-width="1.368" stroke-linecap="round"/><line x1="524.4" y1="255.0" x2="520.9" y2="265.6" stroke="#858585" stroke-width="3.6" stroke-linecap="round"/><line x1="520.9" y1="265.6" x2="517.4" y2="276.1" stroke="#dcdcdc" stroke-width="3.6" stroke-linecap="round"/><line x1="524.4" y1="255.0" x2="520.9" y2="265.6" stroke="#a2a2a2" stroke-width="1.368" stroke-linecap="round"/><line x1="520.9" y1="265.6" x2="517.4" y2="276.1" stroke="#f6f6f6" stroke-width="1.368" stroke-linecap="round"/><line x1="538.6" y1="250.2" x2="540.3" y2="260.5" stroke="#858585" stroke-width="3.6" stroke-linecap="round"/><line x1="540.3" y1="260.5" x2="542.0" y2="270.8" stroke="#dcdcdc" stroke-width="3.6" stroke-linecap="round"/><line x1="538.6" y1="250.2" x2="540.3" y2="260.5" stroke="#a2a2a2" stroke-width="1.368" stroke-linecap="round"/><line x1="540.3" y1="260.5" x2="542.0" y2="270.8" stroke="#f6f6f6" stroke-width="1.368" stroke-linecap="round"/><line x1="566.3" y1="266.2" x2="574.0" y2="256.2" stroke="#858585" stroke-width="3.6" stroke-linecap="round"/><line x1="574.0" y1="256.2" x2="581.7" y2="246.2" stroke="#dcdcdc" stroke-width="3.6" stroke-linecap="round"/><line x1="566.3" y1="266.2" x2="574.0" y2="256.2" stroke="#a2a2a2" stroke-width="1.368" stroke-linecap="round"/><line x1="574.0" y1="256.2" x2="581.7" y2="246.2" stroke="#f6f6f6" stroke-width="1.368" stroke-linecap="round"/><line x1="566.3" y1="266.2" x2="560.2" y2="265.5" stroke="#858585" stroke-width="3.6" stroke-linecap="round"/><line x1="560.2" y1="265.5" x2="554.2" y2="264.9" stroke="#dcdcdc" stroke-width="3.6" stroke-linecap="round"/><line x1="566.3" y1="266.2" x2="560.2" y2="265.5" stroke="#a2a2a2" stroke-width="1.368" stroke-linecap="round"/><line x1="560.2" y1="265.5" x2="554.2" y2="264.9" stroke="#f6f6f6" stroke-width="1.368" stroke-linecap="round"/><line x1="566.3" y1="266.2" x2="561.5" y2="269.8" stroke="#858585" stroke-width="3.6" stroke-linecap="round"/><line x1="561.5" y1="269.8" x2="556.7" y2="273.3" stroke="#dcdcdc" stroke-width="3.6" stroke-linecap="round"/><line x1="566.3" y1="266.2" x2="561.5" y2="269.8" stroke="#a2a2a2" stroke-width="1.368" stroke-linecap="round"/><line x1="561.5" y1="269.8" x2="556.7" y2="273.3" stroke="#f6f6f6" stroke-width="1.368" stroke-linecap="round"/><line x1="566.3" y1="266.2" x2="574.9" y2="282.1" stroke="#858585" stroke-width="3.6" stroke-linecap="round"/><line x1="574.9" y1="282.1" x2="583.5" y2="298.0" stroke="#858585" stroke-width="3.6" stroke-linecap="round"/><line x1="566.3" y1="266.2" x2="574.9" y2="282.1" stroke="#a2a2a2" stroke-width="1.368" stroke-linecap="round"/><line x1="574.9" y1="282.1" x2="583.5" y2="298.0" stroke="#a2a2a2" stroke-width="1.368" stroke-linecap="round"/><line x1="583.5" y1="298.0" x2="599.8" y2="297.8" stroke="#858585" stroke-width="3.6" stroke-linecap="round"/><line x1="599.8" y1="297.8" x2="616.0" y2="297.5" stroke="#8a8ae2" stroke-width="3.6" stroke-linecap="round"/><line x1="583.5" y1="298.0" x2="599.8" y2="297.8" stroke="#a2a2a2" stroke-width="1.368" stroke-linecap="round"/><line x1="599.8" y1="297.8" x2="616.0" y2="297.5" stroke="#a4a4f6" stroke-width="1.368" stroke-linecap="round"/><line x1="623.7" y1="298.0" x2="616.7" y2="285.4" stroke="#858585" stroke-width="3.6" stroke-linecap="round"/><line x1="616.7" y1="285.4" x2="609.6" y2="272.9" stroke="#dcdcdc" stroke-width="3.6" stroke-linecap="round"/><line x1="623.7" y1="298.0" x2="616.7" y2="285.4" stroke="#a2a2a2" stroke-width="1.368" stroke-linecap="round"/><line x1="616.7" y1="285.4" x2="609.6" y2="272.9" stroke="#f6f6f6" stroke-width="1.368" stroke-linecap="round"/><line x1="629.5" y1="291.0" x2="626.5" y2="283.3" stroke="#858585" stroke-width="3.6" stroke-linecap="round"/><line x1="626.5" y1="283.3" x2="623.5" y2="275.6" stroke="#dcdcdc" stroke-width="3.6" stroke-linecap="round"/><line x1="629.5" y1="291.0" x2="626.5" y2="283.3" stroke="#a2a2a2" stroke-width="1.368" stroke-linecap="round"/><line x1="626.5" y1="283.3" x2="623.5" y2="275.6" stroke="#f6f6f6" stroke-width="1.368" stroke-linecap="round"/><line x1="623.7" y1="298.0" x2="611.8" y2="304.5" stroke="#858585" stroke-width="3.6" stroke-linecap="round"/><line x1="611.8" y1="304.5" x2="599.8" y2="311.0" stroke="#dcdcdc" stroke-width="3.6" stroke-linecap="round"/><line x1="623.7" y1="298.0" x2="611.8" y2="304.5" stroke="#a2a2a2" stroke-width="1.368" stroke-linecap="round"/><line x1="611.8" y1="304.5" x2="599.8" y2="311.0" stroke="#f6f6f6" stroke-width="1.368" stroke-linecap="round"/><line x1="623.7" y1="298.0" x2="633.3" y2="306.2" stroke="#858585" stroke-width="3.6" stroke-linecap="round"/><line x1="633.3" y1="306.2" x2="642.9" y2="314.4" stroke="#dcdcdc" stroke-width="3.6" stroke-linecap="round"/><line x1="623.7" y1="298.0" x2="633.3" y2="306.2" stroke="#a2a2a2" stroke-width="1.368" stroke-linecap="round"/><line x1="633.3" y1="306.2" x2="642.9" y2="314.4" stroke="#f6f6f6" stroke-width="1.368" stroke-linecap="round"/><line x1="638.2" y1="198.0" x2="642.1" y2="212.1" stroke="#858585" stroke-width="3.6" stroke-linecap="round"/><line x1="642.1" y1="212.1" x2="646.0" y2="226.1" stroke="#dc0000" stroke-width="3.6" stroke-linecap="round"/><line x1="638.2" y1="198.0" x2="642.1" y2="212.1" stroke="#a2a2a2" stroke-width="1.368" stroke-linecap="round"/><line x1="642.1" y1="212.1" x2="646.0" y2="226.1" stroke="#ff2a2a" stroke-width="1.368" stroke-linecap="round"/><line x1="632.2" y1="341.8" x2="635.0" y2="356.5" stroke="#858585" stroke-width="3.6" stroke-linecap="round"/><line x1="635.0" y1="356.5" x2="637.7" y2="371.2" stroke="#dc0000" stroke-width="3.6" stroke-linecap="round"/><line x1="632.2" y1="341.8" x2="635.0" y2="356.5" stroke="#a2a2a2" stroke-width="1.368" stroke-linecap="round"/><line x1="635.0" y1="356.5" x2="637.7" y2="371.2" stroke="#ff2a2a" stroke-width="1.368" stroke-linecap="round"/><line x1="627.0" y1="186.1" x2="649.5" y2="187.6" stroke="#858585" stroke-width="3.6" stroke-linecap="round"/><line x1="649.5" y1="187.6" x2="672.0" y2="189.0" stroke="#858585" stroke-width="3.6" stroke-linecap="round"/><line x1="627.0" y1="186.1" x2="649.5" y2="187.6" stroke="#a2a2a2" stroke-width="1.368" stroke-linecap="round"/><line x1="649.5" y1="187.6" x2="672.0" y2="189.0" stroke="#a2a2a2" stroke-width="1.368" stroke-linecap="round"/><line x1="640.4" y1="179.5" x2="656.2" y2="179.0" stroke="#858585" stroke-width="3.6" stroke-linecap="round"/><line x1="656.2" y1="179.0" x2="672.0" y2="178.5" stroke="#dcdcdc" stroke-width="3.6" stroke-linecap="round"/><line x1="640.4" y1="179.5" x2="656.2" y2="179.0" stroke="#a2a2a2" stroke-width="1.368" stroke-linecap="round"/><line x1="656.2" y1="179.0" x2="672.0" y2="178.5" stroke="#f6f6f6" stroke-width="1.368" stroke-linecap="round"/><line x1="629.5" y1="291.0" x2="650.8" y2="281.0" stroke="#858585" stroke-width="3.6" stroke-linecap="round"/><line x1="650.8" y1="281.0" x2="672.0" y2="271.0" stroke="#858585" stroke-width="3.6" stroke-linecap="round"/><line x1="629.5" y1="291.0" x2="650.8" y2="281.0" stroke="#a2a2a2" stroke-width="1.368" stroke-linecap="round"/><line x1="650.8" y1="281.0" x2="672.0" y2="271.0" stroke="#a2a2a2" stroke-width="1.368" stroke-linecap="round"/><line x1="639.5" y1="327.2" x2="655.8" y2="323.1" stroke="#858585" stroke-width="3.6" stroke-linecap="round"/><line x1="655.8" y1="323.1" x2="672.0" y2="319.0" stroke="#858585" stroke-width="3.6" stroke-linecap="round"/><line x1="639.5" y1="327.2" x2="655.8" y2="323.1" stroke="#a2a2a2" stroke-width="1.368" stroke-linecap="round"/><line x1="655.8" y1="323.1" x2="672.0" y2="319.0" stroke="#a2a2a2" stroke-width="1.368" stroke-linecap="round"/><line x1="627.0" y1="186.1" x2="632.6" y2="192.1" stroke="#858585" stroke-width="3.6" stroke-linecap="round"/><line x1="632.6" y1="192.1" x2="638.2" y2="198.0" stroke="#858585" stroke-width="3.6" stroke-linecap="round"/><line x1="627.0" y1="186.1" x2="632.6" y2="192.1" stroke="#a2a2a2" stroke-width="1.368" stroke-linecap="round"/><line x1="632.6" y1="192.1" x2="638.2" y2="198.0" stroke="#a2a2a2" stroke-width="1.368" stroke-linecap="round"/><line x1="639.5" y1="327.2" x2="635.9" y2="334.5" stroke="#858585" stroke-width="3.6" stroke-linecap="round"/><line x1="635.9" y1="334.5" x2="632.2" y2="341.8" stroke="#858585" stroke-width="3.6" stroke-linecap="round"/><line x1="639.5" y1="327.2" x2="635.9" y2="334.5" stroke="#a2a2a2" stroke-width="1.368" stroke-linecap="round"/><line x1="635.9" y1="334.5" x2="632.2" y2="341.8" stroke="#a2a2a2" stroke-width="1.368" stroke-linecap="round"/><line x1="600.4" y1="219.4" x2="605.7" y2="232.3" stroke="#858585" stroke-width="2.3" stroke-linecap="round"/><line x1="605.7" y1="232.3" x2="611.1" y2="245.3" stroke="#dc0000" stroke-width="2.3" stroke-linecap="round"/><line x1="603.6" y1="218.0" x2="609.0" y2="231.0" stroke="#858585" stroke-width="2.3" stroke-linecap="round"/><line x1="609.0" y1="231.0" x2="614.3" y2="243.9" stroke="#dc0000" stroke-width="2.3" stroke-linecap="round"/><line x1="582.0" y1="297.1" x2="573.3" y2="311.2" stroke="#858585" stroke-width="2.3" stroke-linecap="round"/><line x1="573.3" y1="311.2" x2="564.5" y2="325.4" stroke="#dc0000" stroke-width="2.3" stroke-linecap="round"/><line x1="585.0" y1="298.9" x2="576.2" y2="313.1" stroke="#858585" stroke-width="2.3" stroke-linecap="round"/><line x1="576.2" y1="313.1" x2="567.5" y2="327.2" stroke="#dc0000" stroke-width="2.3" stroke-linecap="round"/><circle cx="616.0" cy="297.5" r="7" fill="url(#gN)"/><circle cx="661.0" cy="268.0" r="8" fill="url(#gC)"/><circle cx="504.7" cy="338.0" r="6" fill="url(#gH)"/><circle cx="473.5" cy="358.3" r="6" fill="url(#gH)"/><circle cx="453.4" cy="425.6" r="7.5" fill="url(#gO)"/><circle cx="625.0" cy="152.0" r="6" fill="url(#gH)"/><circle cx="629.2" cy="157.0" r="5" fill="url(#gH)"/><circle cx="527.4" cy="192.8" r="8.4" fill="url(#gC)"/><circle cx="511.0" cy="235.3" r="8.4" fill="url(#gC)"/><circle cx="513.4" cy="272.4" r="5.5" fill="url(#gH)"/><circle cx="629.5" cy="291.0" r="8" fill="url(#gC)"/><circle cx="544.4" cy="243.6" r="8" fill="url(#gC)"/><circle cx="543.6" cy="270.3" r="5.5" fill="url(#gH)"/><circle cx="362.2" cy="338.7" r="8.1" fill="url(#gO)"/><circle cx="390.7" cy="351.2" r="8.5" fill="url(#gC)"/><circle cx="391.6" cy="380.6" r="8" fill="url(#gN)"/><circle cx="372.0" cy="387.7" r="6" fill="url(#gH)"/><circle cx="412.1" cy="390.3" r="6" fill="url(#gH)"/><circle cx="420.1" cy="308.5" r="7.5" fill="url(#gC)"/><circle cx="421.0" cy="287.1" r="6" fill="url(#gH)"/><circle cx="402.3" cy="307.1" r="6" fill="url(#gH)"/><circle cx="444.6" cy="303.1" r="6" fill="url(#gH)"/><circle cx="425.1" cy="343.2" r="8.5" fill="url(#gC)"/><circle cx="453.0" cy="322.7" r="8.5" fill="url(#gC)"/><circle cx="485.9" cy="323.6" r="8.5" fill="url(#gC)"/><circle cx="493.9" cy="299.2" r="6" fill="url(#gH)"/><circle cx="455.3" cy="345.0" r="8" fill="url(#gN)"/><circle cx="497.5" cy="339.6" r="6" fill="url(#gH)"/><circle cx="434.3" cy="373.4" r="8.5" fill="url(#gC)"/><circle cx="412.1" cy="377.5" r="6" fill="url(#gH)"/><circle cx="440.6" cy="395.7" r="6" fill="url(#gH)"/><circle cx="464.6" cy="393.9" r="8.5" fill="url(#gC)"/><circle cx="495.0" cy="402.6" r="7.5" fill="url(#gN)"/><circle cx="516.3" cy="402.6" r="6" fill="url(#gH)"/><circle cx="486.6" cy="425.1" r="8" fill="url(#gC)"/><circle cx="485.5" cy="439.3" r="6" fill="url(#gH)"/><circle cx="469.6" cy="452.4" r="8.5" fill="url(#gC)"/><circle cx="433.2" cy="454.1" r="8.5" fill="url(#gC)"/><circle cx="423.3" cy="443.6" r="6" fill="url(#gH)"/><circle cx="461.2" cy="488.0" r="8.5" fill="url(#gC)"/><circle cx="427.3" cy="490.4" r="8.5" fill="url(#gC)"/><circle cx="413.1" cy="503.4" r="6" fill="url(#gH)"/><circle cx="439.9" cy="508.2" r="8.5" fill="url(#gC)"/><circle cx="434.4" cy="530.7" r="6" fill="url(#gH)"/><circle cx="505.6" cy="465.5" r="8.5" fill="url(#gC)"/><circle cx="495.0" cy="446.5" r="6" fill="url(#gH)"/><circle cx="485.9" cy="482.6" r="6" fill="url(#gH)"/><circle cx="504.5" cy="492.0" r="6" fill="url(#gH)"/><circle cx="544.8" cy="491.1" r="6" fill="url(#gH)"/><circle cx="570.0" cy="431.7" r="6" fill="url(#gH)"/><circle cx="603.3" cy="387.4" r="6" fill="url(#gH)"/><circle cx="566.0" cy="326.3" r="8.1" fill="url(#gO)"/><circle cx="628.2" cy="135.2" r="6" fill="url(#gH)"/><circle cx="588.8" cy="148.7" r="6" fill="url(#gH)"/><circle cx="611.8" cy="154.2" r="8" fill="url(#gC)"/><circle cx="640.4" cy="179.5" r="8" fill="url(#gC)"/><circle cx="638.2" cy="198.0" r="8.5" fill="url(#gC)"/><circle cx="646.0" cy="226.1" r="8.1" fill="url(#gO)"/><circle cx="602.0" cy="218.7" r="8.5" fill="url(#gC)"/><circle cx="612.7" cy="244.6" r="8.1" fill="url(#gO)"/><circle cx="569.5" cy="215.5" r="7.5" fill="url(#gN)"/><circle cx="564.1" cy="194.9" r="5.5" fill="url(#gH)"/><circle cx="542.3" cy="187.6" r="8.4" fill="url(#gC)"/><circle cx="547.3" cy="165.5" r="5.5" fill="url(#gH)"/><circle cx="523.5" cy="174.1" r="5.5" fill="url(#gH)"/><circle cx="518.4" cy="227.0" r="8.4" fill="url(#gC)"/><circle cx="545.7" cy="216.7" r="8.4" fill="url(#gC)"/><circle cx="500.0" cy="212.0" r="5.5" fill="url(#gH)"/><circle cx="493.4" cy="254.2" r="5.5" fill="url(#gH)"/><circle cx="524.4" cy="255.0" r="8.4" fill="url(#gC)"/><circle cx="517.4" cy="276.1" r="5.5" fill="url(#gH)"/><circle cx="542.0" cy="270.8" r="5.5" fill="url(#gH)"/><circle cx="566.3" cy="266.2" r="8.5" fill="url(#gC)"/><circle cx="581.7" cy="246.2" r="6" fill="url(#gH)"/><circle cx="583.5" cy="298.0" r="8.5" fill="url(#gC)"/><circle cx="609.6" cy="272.9" r="6" fill="url(#gH)"/><circle cx="623.5" cy="275.6" r="6" fill="url(#gH)"/><circle cx="630.8" cy="277.0" r="6" fill="url(#gH)"/><circle cx="599.8" cy="311.0" r="6" fill="url(#gH)"/><circle cx="624.0" cy="317.4" r="8" fill="url(#gN)"/><circle cx="639.5" cy="327.2" r="8.5" fill="url(#gC)"/><circle cx="637.7" cy="371.2" r="8.1" fill="url(#gO)"/><circle cx="660.0" cy="201.0" r="8" fill="url(#gC)"/><line x1="623.7" y1="298.0" x2="631.6" y2="312.6" stroke="#858585" stroke-width="3.6" stroke-linecap="round"/><line x1="631.6" y1="312.6" x2="639.5" y2="327.2" stroke="#858585" stroke-width="3.6" stroke-linecap="round"/><line x1="623.7" y1="298.0" x2="631.6" y2="312.6" stroke="#a2a2a2" stroke-width="1.368" stroke-linecap="round"/><line x1="631.6" y1="312.6" x2="639.5" y2="327.2" stroke="#a2a2a2" stroke-width="1.368" stroke-linecap="round"/><circle cx="467.2" cy="382.3" r="8.5" fill="url(#gC)"/><circle cx="441.0" cy="385.5" r="5.5" fill="url(#gH)"/><circle cx="556.7" cy="273.3" r="6" fill="url(#gH)"/><circle cx="632.2" cy="341.8" r="8.5" fill="url(#gC)"/><circle cx="477.9" cy="341.4" r="8.5" fill="url(#gC)"/><circle cx="453.9" cy="365.1" r="6" fill="url(#gH)"/><circle cx="445.0" cy="381.4" r="6.3" fill="url(#gH)"/><circle cx="487.7" cy="389.5" r="6" fill="url(#gH)"/><circle cx="455.8" cy="437.0" r="8.5" fill="url(#gC)"/><circle cx="469.6" cy="498.2" r="6" fill="url(#gH)"/><circle cx="525.8" cy="476.1" r="8.5" fill="url(#gC)"/><circle cx="629.1" cy="173.2" r="7.5" fill="url(#gN)"/><circle cx="555.6" cy="213.6" r="5.5" fill="url(#gH)"/><circle cx="538.6" cy="250.2" r="8.8" fill="url(#gC)"/><circle cx="554.2" cy="264.9" r="6" fill="url(#gH)"/><circle cx="623.7" cy="298.0" r="9" fill="url(#gC)"/><circle cx="642.9" cy="314.4" r="6" fill="url(#gH)"/><line x1="623.7" y1="298.0" x2="623.2" y2="311.6" stroke="#858585" stroke-width="3.6" stroke-linecap="round"/><line x1="623.2" y1="311.6" x2="622.8" y2="325.2" stroke="#858585" stroke-width="3.6" stroke-linecap="round"/><line x1="623.7" y1="298.0" x2="623.2" y2="311.6" stroke="#a2a2a2" stroke-width="1.368" stroke-linecap="round"/><line x1="623.2" y1="311.6" x2="622.8" y2="325.2" stroke="#a2a2a2" stroke-width="1.368" stroke-linecap="round"/><line x1="477.9" y1="341.4" x2="472.5" y2="361.9" stroke="#858585" stroke-width="3.6" stroke-linecap="round"/><line x1="472.5" y1="361.9" x2="467.2" y2="382.3" stroke="#858585" stroke-width="3.6" stroke-linecap="round"/><line x1="477.9" y1="341.4" x2="472.5" y2="361.9" stroke="#a2a2a2" stroke-width="1.368" stroke-linecap="round"/><line x1="472.5" y1="361.9" x2="467.2" y2="382.3" stroke="#a2a2a2" stroke-width="1.368" stroke-linecap="round"/><circle cx="627.0" cy="186.1" r="9" fill="url(#gC)"/><circle cx="427.6" cy="304.9" r="8.1" fill="url(#gO)"/><circle cx="532.9" cy="465.0" r="6" fill="url(#gH)"/><circle cx="566.7" cy="329.0" r="5.6" fill="url(#gH)"/><circle cx="608.3" cy="162.4" r="6" fill="url(#gH)"/><circle cx="642.0" cy="343.5" r="5.6" fill="url(#gH)"/><line x1="457.5" y1="328.0" x2="467.7" y2="334.7" stroke="#dcdcdc" stroke-width="2.8" stroke-linecap="round"/><line x1="467.7" y1="334.7" x2="477.9" y2="341.4" stroke="#858585" stroke-width="2.8" stroke-linecap="round"/><line x1="457.5" y1="328.0" x2="467.7" y2="334.7" stroke="#f6f6f6" stroke-width="1.0639999999999998" stroke-linecap="round"/><line x1="467.7" y1="334.7" x2="477.9" y2="341.4" stroke="#a2a2a2" stroke-width="1.0639999999999998" stroke-linecap="round"/><circle cx="457.5" cy="328.0" r="6" fill="url(#gH)"/><ellipse cx="448.2" cy="472.1" rx="8.6" ry="18.6" transform="rotate(17 448.2 472.1)" fill="none" stroke="#c4c4c4" stroke-width="1.1"/>
<ellipse cx="533.2" cy="222.4" rx="6.6" ry="17.7" transform="rotate(8 533.2 222.4)" fill="none" stroke="#8e8e8e" stroke-width="1.1"/>
<path d="M540 385 L552.5 378.3 L566.5 382 L565.5 372 M571 366 L578.5 362.2 L585 359" fill="none" stroke="#00d400" stroke-width="1"/>
<text x="560.3" y="374" font-family="Liberation Sans, sans-serif" font-size="11.5" fill="#00e400" stroke="#00e400" stroke-width="0.25" textLength="28.5" lengthAdjust="spacingAndGlyphs">12.06</text></g></g></svg>
<div class="a" style="left:23px;top:132px;width:309px;height:307px;background:#f3f3f3;border-radius:8px;box-shadow:0 0 0 1px rgba(120,120,120,0.55);"></div>
<svg class="a" style="left:30.299999999999997px;top:138.8px;" width="15.0" height="15.0" viewBox="0 0 15.0 15.0"><circle cx="7.5" cy="7.5" r="7.5" fill="#2a2a2a"/><path d="M4.16 5.68 L10.64 5.68 L7.40 11.25 Z" fill="#1c1c1c" stroke="#8a8a8a" stroke-width="0.56"/><circle cx="4.16" cy="5.68" r="1.52" fill="#f6f6f6"/><circle cx="10.64" cy="5.68" r="1.52" fill="#f6f6f6"/><circle cx="7.40" cy="11.25" r="1.52" fill="#f6f6f6"/></svg>
<span class="t" style="left:48.70px;top:139.00px;font-size:12.5px;letter-spacing:-0.223px;color:#8a8a8a;">Hit Fragment Display Options</span>
<svg class="a" style="left:311px;top:141px;" width="11" height="11" viewBox="0 0 11 11"><path d="M0.5 0.5 L10 10 M10 0.5 L0.5 10" stroke="#7a7a7a" stroke-width="1" fill="none"/></svg>
<div class="a" style="left:31px;top:187px;width:293px;height:217px;background:#f9f9f9;border:1px solid #ebebeb;box-sizing:border-box;"></div>
<div class="a" style="left:145px;top:170px;width:127px;height:17px;background:#f3f3f3;border:1px solid #e4e4e4;box-sizing:border-box;border-bottom:none;border-radius:3px 3px 0 0;"></div>
<span class="t" style="left:155.20px;top:171.00px;font-size:12px;letter-spacing:-0.514px;color:#000;">Fragment Highlighting</span>
<div class="a" style="left:31px;top:168px;width:114px;height:20px;background:#f9f9f9;border:1px solid #ebebeb;box-sizing:border-box;border-bottom:none;border-radius:3px 3px 0 0;"></div>
<span class="t" style="left:41.20px;top:170.00px;font-size:12px;letter-spacing:-0.725px;color:#000;">Fragment Selection</span>
<div class="a" style="left:39.5px;top:195.5px;width:13px;height:13px;background:#1b66b8;border-radius:3px;box-sizing:border-box;"></div>
<svg class="a" style="left:39.5px;top:195.5px;" width="13" height="13" viewBox="0 0 13 13"><path d="M3.2 6.8 L5.6 9.1 L10 4.3" fill="none" stroke="#fff" stroke-width="1.2" stroke-linecap="round" stroke-linejoin="round"/></svg>
<span class="t" style="left:57.60px;top:195.00px;font-size:12px;letter-spacing:-0.541px;color:#000;">Tree view</span>
<div class="a" style="left:179.5px;top:195.5px;width:13px;height:13px;background:#f7f7f7;border:1px solid #878787;border-radius:3px;box-sizing:border-box;"></div>
<span class="t" style="left:197.70px;top:195.00px;font-size:12px;letter-spacing:-0.549px;color:#000;">Load multiple structures</span>
<div class="a" style="left:39px;top:214.5px;width:74px;height:21.5px;background:#fdfdfd;border:1px solid #2b7cd3;border-radius:3px;box-sizing:border-box;"></div>
<span class="t" style="left:54.70px;top:218.00px;font-size:12px;letter-spacing:-0.689px;color:#000;">Select all</span>
<div class="a" style="left:179.5px;top:218.5px;width:13px;height:13px;background:#f7f7f7;border:1px solid #878787;border-radius:3px;box-sizing:border-box;"></div>
<span class="t" style="left:197.70px;top:218.00px;font-size:12px;letter-spacing:-0.525px;color:#000;">Show only hit atoms</span>
<div class="a" style="left:39px;top:240.5px;width:277px;height:134px;background:#fff;border:1px solid #9c9ca8;box-sizing:border-box;"></div>
<span class="t" style="left:42.20px;top:247.00px;font-size:12px;letter-spacing:-0.043px;color:#000;">Structure</span>
<div class="a" style="left:139px;top:242px;width:1px;height:24px;background:#e0e0e0;"></div>
<span class="t" style="left:143.20px;top:247.00px;font-size:12px;letter-spacing:-0.260px;color:#000;">Value</span>
<svg class="a" style="left:43.3px;top:269.3px;" width="12" height="10" viewBox="0 0 12 10"><path d="M2.4 3.2 L6 6.8 L9.6 3.2" fill="none" stroke="#333" stroke-width="1.1" stroke-linecap="round" stroke-linejoin="round"/></svg>
<span class="t" style="left:60.90px;top:268.00px;font-size:12px;letter-spacing:-0.951px;color:#000;">EFUXEM</span>
<svg class="a" style="left:63px;top:287.5px;" width="12" height="10" viewBox="0 0 12 10"><path d="M2.4 3.2 L6 6.8 L9.6 3.2" fill="none" stroke="#333" stroke-width="1.1" stroke-linecap="round" stroke-linejoin="round"/></svg>
<span class="t" style="left:80.90px;top:286.00px;font-size:12px;letter-spacing:-0.169px;color:#000;">Query 1</span>
<div class="a" style="left:100px;top:302.5px;width:214.5px;height:17.2px;background:#d9d9d9;"></div>
<svg class="a" style="left:83.2px;top:305.3px;" width="12" height="10" viewBox="0 0 12 10"><path d="M2.4 3.2 L6 6.8 L9.6 3.2" fill="none" stroke="#333" stroke-width="1.1" stroke-linecap="round" stroke-linejoin="round"/></svg>
<span class="t" style="left:101.20px;top:304.00px;font-size:12px;letter-spacing:-0.382px;color:#000;">Frag...</span>
<span class="t" style="left:121.90px;top:322.00px;font-size:12px;letter-spacing:-0.500px;color:#000;">T...</span>
<span class="t" style="left:141.90px;top:322.00px;font-size:12px;letter-spacing:-0.183px;color:#000;">12.057</span>
<div class="a" style="left:39px;top:380.7px;width:13px;height:13px;background:#1b66b8;border-radius:3px;box-sizing:border-box;"></div>
<svg class="a" style="left:39px;top:380.7px;" width="13" height="13" viewBox="0 0 13 13"><path d="M3.2 6.8 L5.6 9.1 L10 4.3" fill="none" stroke="#fff" stroke-width="1.2" stroke-linecap="round" stroke-linejoin="round"/></svg>
<span class="t" style="left:57.00px;top:380.00px;font-size:12px;letter-spacing:-0.698px;color:#000;">Show parameters:</span>
<div class="a" style="left:151.3px;top:379.4px;width:61px;height:16.2px;background:#fff;border:1px solid #e3e3e3;border-radius:3px;box-sizing:border-box;border-bottom-color:#c8c8c8;"></div>
<span class="t" style="left:153.30px;top:380.00px;font-size:12px;letter-spacing:-0.212px;color:#000;">All</span>
<svg class="a" style="left:197.60000000000002px;top:383.0px;" width="12" height="10" viewBox="0 0 12 10"><path d="M2.2 3.1 L6 6.9 L9.8 3.1" fill="none" stroke="#666" stroke-width="1" stroke-linecap="round" stroke-linejoin="round"/></svg>
<div class="a" style="left:99.4px;top:410.6px;width:78.6px;height:20.8px;background:#fdfdfd;border:1px solid #dcdcdc;border-radius:3px;box-sizing:border-box;border-bottom-color:#c4c4c4;"></div>
<span class="t" style="left:101.33px;top:414.00px;font-size:12px;letter-spacing:-0.531px;color:#000;">Data Analysis...</span>
<div class="a" style="left:184px;top:410.6px;width:72.7px;height:20.8px;background:#fdfdfd;border:1px solid #dcdcdc;border-radius:3px;box-sizing:border-box;border-bottom-color:#c4c4c4;"></div>
<span class="t" style="left:206.80px;top:414.00px;font-size:12px;letter-spacing:-0.896px;color:#000;">Close</span>
<svg class="a" style="left:321px;top:429px;" width="10" height="10" viewBox="0 0 10 10"><g fill="#b5b5b5"><rect x="7" y="1" width="1.5" height="1.5"/><rect x="4" y="4" width="1.5" height="1.5"/><rect x="7" y="4" width="1.5" height="1.5"/><rect x="1" y="7" width="1.5" height="1.5"/><rect x="4" y="7" width="1.5" height="1.5"/><rect x="7" y="7" width="1.5" height="1.5"/></g></svg>
<div class="a" style="left:0px;top:536px;width:1280px;height:138px;background:#f0f0f0;"></div>
<div class="a" style="left:1.5px;top:536.5px;width:1277px;height:140px;background:#f3f3f3;border-radius:6px;box-shadow:0 0 0 1px #e2e2e2;"></div>
<div class="a" style="left:1.5px;top:565px;width:1277px;height:110px;background:#f0f0f0;"></div>
<span class="t" style="left:8.20px;top:543.00px;font-size:12.5px;letter-spacing:-0.236px;color:#999;">Display Options</span>
<div class="a" style="left:5px;top:574px;width:1300px;height:110px;border:1px solid #e0e0e0;border-radius:3px;box-sizing:border-box;"></div>
<div class="a" style="left:8px;top:570px;width:40px;height:10px;background:#f0f0f0;"></div>
<span class="t" style="left:9.70px;top:567.00px;font-size:11.5px;letter-spacing:-0.387px;color:#000;">Display</span>
<div class="a" style="left:12px;top:589.3px;width:13.5px;height:13.5px;background:#f7f7f7;border:1px solid #878787;border-radius:3px;box-sizing:border-box;"></div>
<span class="t" style="left:29.90px;top:589.00px;font-size:11.5px;letter-spacing:-0.559px;color:#000;">Packing</span>
<div class="a" style="left:12px;top:608.7px;width:13.5px;height:13.5px;background:#f7f7f7;border:1px solid #878787;border-radius:3px;box-sizing:border-box;"></div>
<span class="t" style="left:30.20px;top:608.00px;font-size:11.5px;letter-spacing:-0.273px;color:#000;">Asymmetric Unit</span>
<div class="a" style="left:12px;top:628px;width:13.5px;height:13.5px;background:#f7f7f7;border:1px solid #878787;border-radius:3px;box-sizing:border-box;"></div>
<span class="t" style="left:30.20px;top:628.00px;font-size:11.5px;letter-spacing:-0.346px;color:#000;">Auto centre</span>
<div class="a" style="left:13px;top:647.5px;width:98.5px;height:21px;background:#fdfdfd;border:1px solid #dcdcdc;border-radius:3px;box-sizing:border-box;border-bottom-color:#c4c4c4;"></div>
<span class="t" style="left:48.65px;top:651.00px;font-size:11.5px;letter-spacing:-0.708px;color:#000;">Reset</span>
<div class="a" style="left:117.3px;top:591.4px;width:540.5px;height:74.5px;background:#fff;border:1px solid #8f8f8f;box-sizing:border-box;"></div>
<div class="a" style="left:118.3px;top:592.4px;width:538.5px;height:17.6px;background:#d9d9d9;"></div>
<div class="a" style="left:119.5px;top:594.3px;width:13px;height:13px;background:#f7f7f7;border:1px solid #878787;border-radius:3px;box-sizing:border-box;"></div>
<span class="t" style="left:136.20px;top:594.50px;font-size:13px;letter-spacing:-0.468px;color:#000;">Short Contact</span>
<span class="t" style="left:223.50px;top:594.50px;font-size:13px;letter-spacing:-0.341px;color:#000;">&lt; (sum of vdW radii + 0.1A)</span>
<div class="a" style="left:119.5px;top:612.3px;width:13px;height:13px;background:#f7f7f7;border:1px solid #878787;border-radius:3px;box-sizing:border-box;"></div>
<span class="t" style="left:136.20px;top:611.50px;font-size:13px;letter-spacing:-0.346px;color:#000;">H-Bond</span>
<span class="t" style="left:223.50px;top:611.50px;font-size:13px;letter-spacing:-0.285px;color:#000;">Default definition</span>
<div class="a" style="left:800px;top:68.8px;width:500px;height:20px;background:#fff;border:1px solid #cdcdcd;box-sizing:border-box;"></div>
<div class="a" style="left:1150px;top:116px;width:130px;height:420px;background:#f0f0f0;"></div>
<div class="a" style="left:1150px;top:115.2px;width:130px;height:19.6px;background:#d8d8d8;"></div>
<span class="t" style="left:1158.70px;top:119.00px;font-size:12.5px;letter-spacing:-0.233px;color:#000;">ure Navigator</span>
<svg class="a" style="left:1246px;top:121px;" width="30" height="12" viewBox="0 0 30 12"><rect x="2.2" y="4.9" width="5.2" height="4.7" fill="none" stroke="#222" stroke-width="1.1"/><rect x="1.7" y="4.3" width="6.2" height="1.5" fill="#222"/><path d="M4.4 3.6 V2.6 H9.6 V7.2 H8.2" fill="none" stroke="#222" stroke-width="1.1"/><rect x="3.9" y="1.6" width="6.3" height="1.5" fill="#222"/>
<path d="M22 2.6 L28.6 9.2 M28.6 2.6 L22 9.2" stroke="#222" stroke-width="1.7" fill="none"/></svg>
<div class="a" style="left:1140px;top:139.5px;width:138.5px;height:392px;background:#f3f3f3;border:1px solid #c9c9c9;box-sizing:border-box;"></div>
<span class="t" style="left:1153.58px;top:144.00px;font-size:11.5px;letter-spacing:-0.625px;color:#000;">EM</span>
<div class="a" style="left:1236.4px;top:142.2px;width:40.3px;height:20.5px;background:#fdfdfd;border:1px solid #dcdcdc;border-radius:3px;box-sizing:border-box;border-bottom-color:#c4c4c4;"></div>
<span class="t" style="left:1246.03px;top:144.00px;font-size:11.5px;letter-spacing:-0.442px;color:#000;">Find</span>
<div class="a" style="left:1140px;top:166.5px;width:138px;height:363px;background:#fff;border:1px solid #9c9ca8;box-sizing:border-box;"></div>
<span class="t" style="left:1158.70px;top:172.00px;font-size:11.5px;letter-spacing:0.073px;color:#000;">al Structures</span>
<div class="a" style="left:1255.5px;top:168px;width:1px;height:24px;background:#e0e0e0;"></div>
<span class="t" style="left:1259.50px;top:172.00px;font-size:11.5px;letter-spacing:-0.100px;color:#000;">S</span>
<div class="a" style="left:1263.4px;top:167.5px;width:13.6px;height:345px;background:#f0f0f0;"></div>
<div class="a" style="left:1267.5px;top:185.8px;width:6.8px;height:17.8px;background:#8a8a8a;"></div>
<div class="a" style="left:1189.2px;top:191.8px;width:72.7px;height:17.2px;background:#d9d9d9;"></div>
<span class="t" style="left:1190.40px;top:193.00px;font-size:11.5px;letter-spacing:-0.653px;color:#000;">EFUXEM</span>
<span class="t" style="left:1258.00px;top:193.00px;font-size:11.5px;letter-spacing:-0.100px;color:#000;">C</span>
<span class="t" style="left:1190.40px;top:211.00px;font-size:11.5px;letter-spacing:-0.302px;color:#000;">EFUXIQ</span>
<span class="t" style="left:1258.00px;top:211.00px;font-size:11.5px;letter-spacing:-0.100px;color:#000;">P</span>
<span class="t" style="left:1190.40px;top:229.00px;font-size:11.5px;letter-spacing:-0.245px;color:#000;">EFUXOW</span>
<span class="t" style="left:1258.00px;top:229.00px;font-size:11.5px;letter-spacing:-0.100px;color:#000;">P</span>
<span class="t" style="left:1190.40px;top:247.00px;font-size:11.5px;letter-spacing:-0.245px;color:#000;">EFUXOW</span>
<span class="t" style="left:1258.00px;top:247.00px;font-size:11.5px;letter-spacing:-0.100px;color:#000;">P</span>
<span class="t" style="left:1190.40px;top:265.00px;font-size:11.5px;letter-spacing:-0.737px;color:#000;">FOCKER</span>
<span class="t" style="left:1258.00px;top:265.00px;font-size:11.5px;letter-spacing:-0.100px;color:#000;">P</span>
<span class="t" style="left:1190.40px;top:283.00px;font-size:11.5px;letter-spacing:-0.650px;color:#000;">LOBPIF</span>
<span class="t" style="left:1258.00px;top:283.00px;font-size:11.5px;letter-spacing:-0.100px;color:#000;">P</span>
<span class="t" style="left:1190.40px;top:301.00px;font-size:11.5px;letter-spacing:-0.504px;color:#000;">LOBPOL</span>
<span class="t" style="left:1258.00px;top:301.00px;font-size:11.5px;letter-spacing:-0.100px;color:#000;">P</span>
<span class="t" style="left:1190.40px;top:319.00px;font-size:11.5px;letter-spacing:-0.504px;color:#000;">LOBPOL</span>
<span class="t" style="left:1258.00px;top:319.00px;font-size:11.5px;letter-spacing:-0.100px;color:#000;">P</span>
<span class="t" style="left:1190.40px;top:337.00px;font-size:11.5px;letter-spacing:-0.632px;color:#000;">LOBPUR</span>
<span class="t" style="left:1258.00px;top:337.00px;font-size:11.5px;letter-spacing:-0.100px;color:#000;">P</span>
<span class="t" style="left:1190.40px;top:355.00px;font-size:11.5px;letter-spacing:-0.632px;color:#000;">LOBPUR</span>
<span class="t" style="left:1258.00px;top:355.00px;font-size:11.5px;letter-spacing:-0.100px;color:#000;">P</span>
<span class="t" style="left:1190.40px;top:373.00px;font-size:11.5px;letter-spacing:0.249px;color:#000;">MIVQOB</span>
<span class="t" style="left:1258.00px;top:373.00px;font-size:11.5px;letter-spacing:-0.100px;color:#000;">P</span>
<span class="t" style="left:1190.40px;top:391.00px;font-size:11.5px;letter-spacing:0.249px;color:#000;">MIVQOB</span>
<span class="t" style="left:1258.00px;top:391.00px;font-size:11.5px;letter-spacing:-0.100px;color:#000;">P</span>
<span class="t" style="left:1190.40px;top:409.00px;font-size:11.5px;letter-spacing:-0.060px;color:#000;">NITGOQ</span>
<span class="t" style="left:1258.00px;top:409.00px;font-size:11.5px;letter-spacing:-0.100px;color:#000;">P</span>
<span class="t" style="left:1190.40px;top:427.00px;font-size:11.5px;letter-spacing:-0.163px;color:#000;">NOCXEM</span>
<span class="t" style="left:1258.00px;top:427.00px;font-size:11.5px;letter-spacing:-0.100px;color:#000;">P</span>
<span class="t" style="left:1190.40px;top:445.00px;font-size:11.5px;letter-spacing:-0.218px;color:#000;">SIXWAB</span>
<span class="t" style="left:1258.00px;top:445.00px;font-size:11.5px;letter-spacing:-0.100px;color:#000;">P</span>
<span class="t" style="left:1190.40px;top:463.00px;font-size:11.5px;letter-spacing:-0.339px;color:#000;">VOHFIL</span>
<span class="t" style="left:1258.00px;top:463.00px;font-size:11.5px;letter-spacing:-0.100px;color:#000;">P</span>
<span class="t" style="left:1190.40px;top:481.00px;font-size:11.5px;letter-spacing:-0.339px;color:#000;">VOHFIL</span>
<span class="t" style="left:1258.00px;top:481.00px;font-size:11.5px;letter-spacing:-0.100px;color:#000;">P</span>
<span class="t" style="left:1190.40px;top:499.00px;font-size:11.5px;letter-spacing:-0.339px;color:#000;">VOHFIL</span>
<span class="t" style="left:1258.00px;top:499.00px;font-size:11.5px;letter-spacing:-0.100px;color:#000;">P</span>
<div class="a" style="left:1263.4px;top:167.5px;width:13.6px;height:345px;background:#f0f0f0;"></div>
<div class="a" style="left:1267.5px;top:185.8px;width:6.8px;height:17.8px;background:#8a8a8a;"></div>
<div class="a" style="left:1141px;top:512.6px;width:136px;height:16px;background:#f0f0f0;"></div>
<div class="a" style="left:1150px;top:518px;width:66.5px;height:6.5px;background:#8a8a8a;"></div>
<div class="a" style="left:1120px;top:532px;width:82.2px;height:20px;background:#fdfdfd;border:1px solid #dcdcdc;border-radius:3px;box-sizing:border-box;border-bottom-color:#c4c4c4;"></div>
<span class="t" style="left:1161.05px;top:534.00px;font-size:11.5px;letter-spacing:-0.100px;color:#000;"></span>
<span class="t" style="left:1158.70px;top:534.00px;font-size:11.5px;letter-spacing:0.783px;color:#000;">&lt;&lt;</span>
<div class="a" style="left:1205.2px;top:532px;width:73.6px;height:20px;background:#fdfdfd;border:1px solid #dcdcdc;border-radius:3px;box-sizing:border-box;border-bottom-color:#c4c4c4;"></div>
<span class="t" style="left:1234.64px;top:534.00px;font-size:11.5px;letter-spacing:1.283px;color:#000;">&gt;&gt;</span>
<span class="t" style="left:1158.70px;top:557.00px;font-size:11.5px;letter-spacing:-0.566px;color:#000;">ree View</span>
<div class="a" style="left:1140px;top:576.5px;width:160px;height:52px;border:1px solid #e0e0e0;border-radius:3px;box-sizing:border-box;"></div>
<div class="a" style="left:1149.4px;top:585.9px;width:13px;height:13px;background:#f7f7f7;border:1px solid #878787;border-radius:3px;box-sizing:border-box;"></div>
<span class="t" style="left:1166.70px;top:585.00px;font-size:11.5px;letter-spacing:-0.328px;color:#000;">Multiple Structures</span>
<div class="a" style="left:1150px;top:603.7px;width:107.4px;height:20.8px;background:#fdfdfd;border:1px solid #dcdcdc;border-radius:3px;box-sizing:border-box;border-bottom-color:#c4c4c4;"></div>
<span class="t" style="left:1203.65px;top:606.00px;font-size:11.5px;letter-spacing:-0.100px;color:#000;"></span>
<span class="t" style="left:1174.10px;top:607.00px;font-size:11.5px;letter-spacing:-0.307px;color:#000;">Structures...</span>
<div class="a" style="left:1140px;top:635.8px;width:89.8px;height:17.5px;background:#f9f9f9;border:1px solid #e6e6e6;box-sizing:border-box;"></div>
<span class="t" style="left:1158.70px;top:637.00px;font-size:11.5px;letter-spacing:-0.373px;color:#000;">cture Navi...</span>
<div class="a" style="left:1229.8px;top:635.8px;width:52px;height:17.5px;background:#f3f3f3;border:1px solid #e0e0e0;box-sizing:border-box;"></div>
<span class="t" style="left:1242.40px;top:637.00px;font-size:11.5px;letter-spacing:-0.674px;color:#000;">Sea...</span>
<div class="a" style="left:658px;top:40px;width:501px;height:622.5px;border-radius:8px;overflow:hidden;background:#f0f0f0;box-shadow:0 0 0 1px rgba(110,110,110,0.55),0 12px 30px rgba(0,0,0,0.34),0 0 14px rgba(0,0,0,0.22);"></div>
<div class="a" style="left:658px;top:40px;width:501px;height:622.5px;border-radius:8px;overflow:hidden;">
<div class="a" style="left:0;top:0;width:501px;height:29.5px;background:#edf2f8;"></div>
<div class="a" style="left:0;top:29.5px;width:501px;height:21.3px;background:#fff;"></div>
<div class="a" style="left:0;top:50.8px;width:501px;height:18.7px;background:#d9d9d9;"></div>
</div>
<svg class="a" style="left:666.0px;top:47.1px;" width="15.0" height="15.0" viewBox="0 0 15.0 15.0"><circle cx="7.5" cy="7.5" r="7.5" fill="#2a2a2a"/><path d="M4.16 5.68 L10.64 5.68 L7.40 11.25 Z" fill="#1c1c1c" stroke="#8a8a8a" stroke-width="0.56"/><circle cx="4.16" cy="5.68" r="1.52" fill="#f6f6f6"/><circle cx="10.64" cy="5.68" r="1.52" fill="#f6f6f6"/><circle cx="7.40" cy="11.25" r="1.52" fill="#f6f6f6"/></svg>
<span class="t" style="left:684.40px;top:47.00px;font-size:12.5px;letter-spacing:-0.387px;color:#000;">Data Analysis</span>
<svg class="a" style="left:1030px;top:45px;" width="120" height="20" viewBox="0 0 120 20"><path d="M7.5 9.5 H17.5" stroke="#1a1a1a" stroke-width="1" fill="none"/>
<rect x="54" y="5" width="9.5" height="9.5" rx="1.5" fill="none" stroke="#1a1a1a" stroke-width="1.1"/>
<path d="M101 5 L111 15 M111 5 L101 15" stroke="#1a1a1a" stroke-width="1.1" fill="none"/></svg>
<span class="t" style="left:663.10px;top:73.00px;font-size:12.5px;letter-spacing:-0.710px;color:#000;">File</span>
<span class="t" style="left:691.10px;top:73.00px;font-size:12.5px;letter-spacing:0.018px;color:#000;">Options</span>
<span class="t" style="left:660.40px;top:94.00px;font-size:12.5px;letter-spacing:-0.474px;color:#000;">search1 Spreadsheet 1</span>
<svg class="a" style="left:1122px;top:95px;" width="32" height="12" viewBox="0 0 32 12"><rect x="2.2" y="4.9" width="5.2" height="4.7" fill="none" stroke="#222" stroke-width="1.1"/><rect x="1.7" y="4.3" width="6.2" height="1.5" fill="#222"/><path d="M4.4 3.6 V2.6 H9.6 V7.2 H8.2" fill="none" stroke="#222" stroke-width="1.1"/><rect x="3.9" y="1.6" width="6.3" height="1.5" fill="#222"/>
<path d="M23 3.2 L29.4 9.6 M29.4 3.2 L23 9.6" stroke="#222" stroke-width="1.7" fill="none"/></svg>
<div class="a" style="left:668px;top:121.5px;width:440px;height:22px;background:#fff;"></div>
<span class="t" style="left:672.70px;top:125.00px;font-size:12.5px;letter-spacing:-0.535px;color:#000;">File</span>
<span class="t" style="left:700.70px;top:125.00px;font-size:12.5px;letter-spacing:-0.196px;color:#000;">Tools</span>
<span class="t" style="left:739.20px;top:125.00px;font-size:12.5px;letter-spacing:-0.291px;color:#000;">Descriptors</span>
<span class="t" style="left:809.90px;top:125.00px;font-size:12.5px;letter-spacing:-0.255px;color:#000;">Display</span>
<span class="t" style="left:859.30px;top:125.00px;font-size:12.5px;letter-spacing:-0.436px;color:#000;">Selection</span>
<span class="t" style="left:917.40px;top:125.00px;font-size:12.5px;letter-spacing:-0.278px;color:#000;">Plots</span>
<span class="t" style="left:954.00px;top:125.00px;font-size:12.5px;letter-spacing:-0.361px;color:#000;">Statistics</span>
<div class="a" style="left:1108.3px;top:121.5px;width:19.3px;height:21.3px;background:#fdfdfd;border:1px solid #dcdcdc;border-radius:3px;box-sizing:border-box;border-bottom-color:#c4c4c4;"></div>
<svg class="a" style="left:1108.3px;top:121.5px;" width="19" height="21" viewBox="0 0 19 21"><rect x="5.6" y="9.6" width="8" height="6.4" rx="0.8" fill="#111"/><path d="M7.2 9.8 V7.8 a2.4 2.4 0 0 1 4.8 0 V9.8" fill="none" stroke="#111" stroke-width="1.5"/><rect x="9.1" y="11.6" width="1" height="2.4" fill="#fff"/></svg>
<div class="a" style="left:1129.7px;top:121.5px;width:18.8px;height:21.3px;background:#fdfdfd;border:1px solid #dcdcdc;border-radius:3px;box-sizing:border-box;border-bottom-color:#c4c4c4;"></div>
<svg class="a" style="left:1129.7px;top:121.5px;" width="19" height="21" viewBox="0 0 19 21"><path d="M7.9 14.9 A3.5 4 0 0 1 7.1 7.6 M9.9 7.1 A3.5 4 0 0 1 10.7 14.4" fill="none" stroke="#111" stroke-width="1.5"/><path d="M6.6 5.5 L10.2 7.5 L6.9 9.8 Z M11.2 16.5 L7.6 14.5 L10.9 12.2 Z" fill="#111"/></svg>
<span class="t" style="left:666.00px;top:154.00px;font-size:12.5px;letter-spacing:-0.669px;color:#000;">Find identifier</span>
<div class="a" style="left:738px;top:154px;width:165px;height:17px;background:#fff;border:1px solid #e6e6e6;box-sizing:border-box;border-bottom:1px solid #8c8c8c;border-radius:3px;"></div>
<div class="a" style="left:910.7px;top:152.2px;width:72.9px;height:20.6px;background:#fdfdfd;border:1px solid #dcdcdc;border-radius:3px;box-sizing:border-box;border-bottom-color:#c4c4c4;"></div>
<span class="t" style="left:924.63px;top:155.00px;font-size:12px;letter-spacing:-0.540px;color:#000;">Find next</span>
<div class="a" style="left:667.4px;top:181px;width:483px;height:473px;background:#fff;border:1px solid #9c9ca8;box-sizing:border-box;"></div>
<div class="a" style="left:1133.2px;top:182px;width:16.2px;height:471px;background:#f0f0f0;"></div>
<div class="a" style="left:1137.7px;top:197.6px;width:7.2px;height:18px;background:#8a8a8a;"></div>
<div class="a" style="left:822.7px;top:182px;width:1px;height:19px;background:#e2e2e2;"></div>
<div class="a" style="left:883.6px;top:182px;width:1px;height:19px;background:#e2e2e2;"></div>
<div class="a" style="left:926.2px;top:182px;width:1px;height:19px;background:#e2e2e2;"></div>
<div class="a" style="left:987.6px;top:182px;width:1px;height:19px;background:#e2e2e2;"></div>
<div class="a" style="left:1045.6px;top:182px;width:1px;height:19px;background:#e2e2e2;"></div>
<span class="t" style="left:721.55px;top:183.00px;font-size:12px;letter-spacing:0.098px;color:#000;">Identifier</span>
<span class="t" style="left:837.92px;top:183.00px;font-size:12px;letter-spacing:-1.168px;color:#000;">NAME</span>
<span class="t" style="left:892.78px;top:183.00px;font-size:12px;letter-spacing:-0.445px;color:#000;">...ery</span>
<span class="t" style="left:937.42px;top:183.00px;font-size:12px;letter-spacing:-0.456px;color:#000;">...gment</span>
<span class="t" style="left:1002.55px;top:183.00px;font-size:12px;letter-spacing:-1.096px;color:#000;">TOR1</span>
<div class="a" style="left:687.7px;top:201.6px;width:358.3px;height:17.4px;background:#cce6fa;border:1px solid #eecdb0;box-sizing:border-box;"></div>
<span class="t" style="left:688.90px;top:203.00px;font-size:12px;letter-spacing:-0.575px;color:#000;">search1|EFUXEM|0</span>
<span class="t" style="left:824.70px;top:203.00px;font-size:12px;letter-spacing:-1.001px;color:#000;">EFUXEM</span>
<span class="t" style="left:916.93px;top:203.00px;font-size:12px;letter-spacing:-0.100px;color:#000;">1</span>
<span class="t" style="left:978.93px;top:203.00px;font-size:12px;letter-spacing:-0.100px;color:#000;">1</span>
<span class="t" style="left:1002.28px;top:203.00px;font-size:12px;letter-spacing:-0.225px;color:#000;">12.0570</span>
<span class="t" style="left:688.90px;top:221.00px;font-size:12px;letter-spacing:-0.429px;color:#000;">search1|EFUXIQ|1</span>
<span class="t" style="left:824.70px;top:221.00px;font-size:12px;letter-spacing:-0.612px;color:#000;">EFUXIQ</span>
<span class="t" style="left:916.93px;top:221.00px;font-size:12px;letter-spacing:-0.100px;color:#000;">1</span>
<span class="t" style="left:978.93px;top:221.00px;font-size:12px;letter-spacing:-0.100px;color:#000;">1</span>
<span class="t" style="left:1008.77px;top:221.00px;font-size:12px;letter-spacing:-0.233px;color:#000;">1.7060</span>
<span class="t" style="left:688.90px;top:239.00px;font-size:12px;letter-spacing:-0.429px;color:#000;">search1|EFUXOW|2</span>
<span class="t" style="left:824.70px;top:239.00px;font-size:12px;letter-spacing:-0.611px;color:#000;">EFUXOW</span>
<span class="t" style="left:916.93px;top:239.00px;font-size:12px;letter-spacing:-0.100px;color:#000;">1</span>
<span class="t" style="left:978.93px;top:239.00px;font-size:12px;letter-spacing:-0.100px;color:#000;">1</span>
<span class="t" style="left:1004.54px;top:239.00px;font-size:12px;letter-spacing:-0.156px;color:#000;">-3.1980</span>
<span class="t" style="left:688.90px;top:257.00px;font-size:12px;letter-spacing:-0.429px;color:#000;">search1|EFUXOW|3</span>
<span class="t" style="left:824.70px;top:257.00px;font-size:12px;letter-spacing:-0.611px;color:#000;">EFUXOW</span>
<span class="t" style="left:916.93px;top:257.00px;font-size:12px;letter-spacing:-0.100px;color:#000;">1</span>
<span class="t" style="left:978.93px;top:257.00px;font-size:12px;letter-spacing:-0.100px;color:#000;">2</span>
<span class="t" style="left:1002.28px;top:257.00px;font-size:12px;letter-spacing:-0.225px;color:#000;">17.1750</span>
<span class="t" style="left:688.90px;top:275.00px;font-size:12px;letter-spacing:-0.606px;color:#000;">search1|FOCKER|4</span>
<span class="t" style="left:824.70px;top:275.00px;font-size:12px;letter-spacing:-1.084px;color:#000;">FOCKER</span>
<span class="t" style="left:916.93px;top:275.00px;font-size:12px;letter-spacing:-0.100px;color:#000;">1</span>
<span class="t" style="left:978.93px;top:275.00px;font-size:12px;letter-spacing:-0.100px;color:#000;">1</span>
<span class="t" style="left:1008.77px;top:275.00px;font-size:12px;letter-spacing:-0.233px;color:#000;">1.0000</span>
<span class="t" style="left:688.90px;top:293.00px;font-size:12px;letter-spacing:-0.555px;color:#000;">search1|LOBPIF|5</span>
<span class="t" style="left:824.70px;top:293.00px;font-size:12px;letter-spacing:-0.946px;color:#000;">LOBPIF</span>
<span class="t" style="left:916.93px;top:293.00px;font-size:12px;letter-spacing:-0.100px;color:#000;">1</span>
<span class="t" style="left:978.93px;top:293.00px;font-size:12px;letter-spacing:-0.100px;color:#000;">1</span>
<span class="t" style="left:991.54px;top:293.00px;font-size:12px;letter-spacing:-0.160px;color:#000;">-138.9960</span>
<span class="t" style="left:688.90px;top:311.00px;font-size:12px;letter-spacing:-0.514px;color:#000;">search1|LOBPOL|6</span>
<span class="t" style="left:824.70px;top:311.00px;font-size:12px;letter-spacing:-0.837px;color:#000;">LOBPOL</span>
<span class="t" style="left:916.93px;top:311.00px;font-size:12px;letter-spacing:-0.100px;color:#000;">1</span>
<span class="t" style="left:978.93px;top:311.00px;font-size:12px;letter-spacing:-0.100px;color:#000;">1</span>
<span class="t" style="left:1004.54px;top:311.00px;font-size:12px;letter-spacing:-0.156px;color:#000;">-2.3280</span>
<span class="t" style="left:688.90px;top:329.00px;font-size:12px;letter-spacing:-0.514px;color:#000;">search1|LOBPOL|7</span>
<span class="t" style="left:824.70px;top:329.00px;font-size:12px;letter-spacing:-0.837px;color:#000;">LOBPOL</span>
<span class="t" style="left:916.93px;top:329.00px;font-size:12px;letter-spacing:-0.100px;color:#000;">1</span>
<span class="t" style="left:978.93px;top:329.00px;font-size:12px;letter-spacing:-0.100px;color:#000;">2</span>
<span class="t" style="left:1008.77px;top:329.00px;font-size:12px;letter-spacing:-0.233px;color:#000;">2.4340</span>
<span class="t" style="left:688.90px;top:347.00px;font-size:12px;letter-spacing:-0.565px;color:#000;">search1|LOBPUR|8</span>
<span class="t" style="left:824.70px;top:347.00px;font-size:12px;letter-spacing:-0.975px;color:#000;">LOBPUR</span>
<span class="t" style="left:916.93px;top:347.00px;font-size:12px;letter-spacing:-0.100px;color:#000;">1</span>
<span class="t" style="left:978.93px;top:347.00px;font-size:12px;letter-spacing:-0.100px;color:#000;">1</span>
<span class="t" style="left:1002.28px;top:347.00px;font-size:12px;letter-spacing:-0.225px;color:#000;">14.2600</span>
<span class="t" style="left:688.90px;top:365.00px;font-size:12px;letter-spacing:-0.565px;color:#000;">search1|LOBPUR|9</span>
<span class="t" style="left:824.70px;top:365.00px;font-size:12px;letter-spacing:-0.975px;color:#000;">LOBPUR</span>
<span class="t" style="left:916.93px;top:365.00px;font-size:12px;letter-spacing:-0.100px;color:#000;">1</span>
<span class="t" style="left:978.93px;top:365.00px;font-size:12px;letter-spacing:-0.100px;color:#000;">2</span>
<span class="t" style="left:1004.54px;top:365.00px;font-size:12px;letter-spacing:-0.156px;color:#000;">-9.6580</span>
<span class="t" style="left:688.90px;top:383.00px;font-size:12px;letter-spacing:-0.240px;color:#000;">search1|MIVQOB|10</span>
<span class="t" style="left:824.70px;top:383.00px;font-size:12px;letter-spacing:-0.084px;color:#000;">MIVQOB</span>
<span class="t" style="left:916.93px;top:383.00px;font-size:12px;letter-spacing:-0.100px;color:#000;">1</span>
<span class="t" style="left:978.93px;top:383.00px;font-size:12px;letter-spacing:-0.100px;color:#000;">1</span>
<span class="t" style="left:998.04px;top:383.00px;font-size:12px;letter-spacing:-0.159px;color:#000;">-18.6250</span>
<span class="t" style="left:688.90px;top:401.00px;font-size:12px;letter-spacing:-0.187px;color:#000;">search1|MIVQOB|11</span>
<span class="t" style="left:824.70px;top:401.00px;font-size:12px;letter-spacing:-0.084px;color:#000;">MIVQOB</span>
<span class="t" style="left:916.93px;top:401.00px;font-size:12px;letter-spacing:-0.100px;color:#000;">1</span>
<span class="t" style="left:978.93px;top:401.00px;font-size:12px;letter-spacing:-0.100px;color:#000;">2</span>
<span class="t" style="left:1004.54px;top:401.00px;font-size:12px;letter-spacing:-0.156px;color:#000;">-2.6010</span>
<span class="t" style="left:688.90px;top:419.00px;font-size:12px;letter-spacing:-0.347px;color:#000;">search1|NITGOQ|12</span>
<span class="t" style="left:824.70px;top:419.00px;font-size:12px;letter-spacing:-0.388px;color:#000;">NITGOQ</span>
<span class="t" style="left:916.93px;top:419.00px;font-size:12px;letter-spacing:-0.100px;color:#000;">1</span>
<span class="t" style="left:978.93px;top:419.00px;font-size:12px;letter-spacing:-0.100px;color:#000;">1</span>
<span class="t" style="left:1004.54px;top:419.00px;font-size:12px;letter-spacing:-0.156px;color:#000;">-0.1620</span>
<span class="t" style="left:688.90px;top:438.00px;font-size:12px;letter-spacing:-0.397px;color:#000;">search1|NOCXEM|13</span>
<span class="t" style="left:824.70px;top:438.00px;font-size:12px;letter-spacing:-0.528px;color:#000;">NOCXEM</span>
<span class="t" style="left:916.93px;top:438.00px;font-size:12px;letter-spacing:-0.100px;color:#000;">1</span>
<span class="t" style="left:978.93px;top:438.00px;font-size:12px;letter-spacing:-0.100px;color:#000;">1</span>
<span class="t" style="left:1004.54px;top:438.00px;font-size:12px;letter-spacing:-0.156px;color:#000;">-4.8180</span>
<span class="t" style="left:688.90px;top:456.00px;font-size:12px;letter-spacing:-0.400px;color:#000;">search1|SIXWAB|14</span>
<span class="t" style="left:824.70px;top:456.00px;font-size:12px;letter-spacing:-0.539px;color:#000;">SIXWAB</span>
<span class="t" style="left:916.93px;top:456.00px;font-size:12px;letter-spacing:-0.100px;color:#000;">1</span>
<span class="t" style="left:978.93px;top:456.00px;font-size:12px;letter-spacing:-0.100px;color:#000;">1</span>
<span class="t" style="left:1004.54px;top:456.00px;font-size:12px;letter-spacing:-0.156px;color:#000;">-4.0420</span>
<span class="t" style="left:688.90px;top:474.00px;font-size:12px;letter-spacing:-0.436px;color:#000;">search1|VOHFIL|15</span>
<span class="t" style="left:824.70px;top:474.00px;font-size:12px;letter-spacing:-0.640px;color:#000;">VOHFIL</span>
<span class="t" style="left:916.93px;top:474.00px;font-size:12px;letter-spacing:-0.100px;color:#000;">1</span>
<span class="t" style="left:978.93px;top:474.00px;font-size:12px;letter-spacing:-0.100px;color:#000;">1</span>
<span class="t" style="left:1004.54px;top:474.00px;font-size:12px;letter-spacing:-0.156px;color:#000;">-0.4670</span>
<span class="t" style="left:688.90px;top:492.00px;font-size:12px;letter-spacing:-0.436px;color:#000;">search1|VOHFIL|16</span>
<span class="t" style="left:824.70px;top:492.00px;font-size:12px;letter-spacing:-0.640px;color:#000;">VOHFIL</span>
<span class="t" style="left:916.93px;top:492.00px;font-size:12px;letter-spacing:-0.100px;color:#000;">1</span>
<span class="t" style="left:978.93px;top:492.00px;font-size:12px;letter-spacing:-0.100px;color:#000;">2</span>
<span class="t" style="left:1004.54px;top:492.00px;font-size:12px;letter-spacing:-0.156px;color:#000;">-2.4800</span>
<span class="t" style="left:688.90px;top:510.00px;font-size:12px;letter-spacing:-0.436px;color:#000;">search1|VOHFIL|17</span>
<span class="t" style="left:824.70px;top:510.00px;font-size:12px;letter-spacing:-0.640px;color:#000;">VOHFIL</span>
<span class="t" style="left:916.93px;top:510.00px;font-size:12px;letter-spacing:-0.100px;color:#000;">1</span>
<span class="t" style="left:978.93px;top:510.00px;font-size:12px;letter-spacing:-0.100px;color:#000;">3</span>
<span class="t" style="left:998.04px;top:510.00px;font-size:12px;letter-spacing:-0.159px;color:#000;">-15.2970</span>
<span class="t" style="left:688.90px;top:528.00px;font-size:12px;letter-spacing:-0.436px;color:#000;">search1|VOHFIL|18</span>
<span class="t" style="left:824.70px;top:528.00px;font-size:12px;letter-spacing:-0.640px;color:#000;">VOHFIL</span>
<span class="t" style="left:916.93px;top:528.00px;font-size:12px;letter-spacing:-0.100px;color:#000;">1</span>
<span class="t" style="left:978.93px;top:528.00px;font-size:12px;letter-spacing:-0.100px;color:#000;">4</span>
<span class="t" style="left:1008.77px;top:528.00px;font-size:12px;letter-spacing:-0.233px;color:#000;">5.1040</span>
<span class="t" style="left:688.90px;top:546.00px;font-size:12px;letter-spacing:-0.436px;color:#000;">search1|VOHFIL|19</span>
<span class="t" style="left:824.70px;top:546.00px;font-size:12px;letter-spacing:-0.640px;color:#000;">VOHFIL</span>
<span class="t" style="left:916.93px;top:546.00px;font-size:12px;letter-spacing:-0.100px;color:#000;">1</span>
<span class="t" style="left:978.93px;top:546.00px;font-size:12px;letter-spacing:-0.100px;color:#000;">5</span>
<span class="t" style="left:1004.54px;top:546.00px;font-size:12px;letter-spacing:-0.156px;color:#000;">-4.4120</span>
<span class="t" style="left:688.90px;top:564.00px;font-size:12px;letter-spacing:-0.436px;color:#000;">search1|VOHFIL|20</span>
<span class="t" style="left:824.70px;top:564.00px;font-size:12px;letter-spacing:-0.640px;color:#000;">VOHFIL</span>
<span class="t" style="left:916.93px;top:564.00px;font-size:12px;letter-spacing:-0.100px;color:#000;">1</span>
<span class="t" style="left:978.93px;top:564.00px;font-size:12px;letter-spacing:-0.100px;color:#000;">6</span>
<span class="t" style="left:1008.77px;top:564.00px;font-size:12px;letter-spacing:-0.233px;color:#000;">2.1080</span>
<span class="t" style="left:688.90px;top:582.00px;font-size:12px;letter-spacing:-0.436px;color:#000;">search1|VOHFIL|21</span>
<span class="t" style="left:824.70px;top:582.00px;font-size:12px;letter-spacing:-0.640px;color:#000;">VOHFIL</span>
<span class="t" style="left:916.93px;top:582.00px;font-size:12px;letter-spacing:-0.100px;color:#000;">1</span>
<span class="t" style="left:978.93px;top:582.00px;font-size:12px;letter-spacing:-0.100px;color:#000;">7</span>
<span class="t" style="left:1004.54px;top:582.00px;font-size:12px;letter-spacing:-0.156px;color:#000;">-4.0220</span>
<span class="t" style="left:688.90px;top:600.00px;font-size:12px;letter-spacing:-0.436px;color:#000;">search1|VOHFIL|22</span>
<span class="t" style="left:824.70px;top:600.00px;font-size:12px;letter-spacing:-0.640px;color:#000;">VOHFIL</span>
<span class="t" style="left:916.93px;top:600.00px;font-size:12px;letter-spacing:-0.100px;color:#000;">1</span>
<span class="t" style="left:978.93px;top:600.00px;font-size:12px;letter-spacing:-0.100px;color:#000;">8</span>
<span class="t" style="left:1008.77px;top:600.00px;font-size:12px;letter-spacing:-0.233px;color:#000;">2.2350</span>
<span class="t" style="left:688.90px;top:618.00px;font-size:12px;letter-spacing:-0.426px;color:#000;">search1|VOHGEI|23</span>
<span class="t" style="left:824.70px;top:618.00px;font-size:12px;letter-spacing:-0.613px;color:#000;">VOHGEI</span>
<span class="t" style="left:916.93px;top:618.00px;font-size:12px;letter-spacing:-0.100px;color:#000;">1</span>
<span class="t" style="left:978.93px;top:618.00px;font-size:12px;letter-spacing:-0.100px;color:#000;">1</span>
<span class="t" style="left:1008.77px;top:618.00px;font-size:12px;letter-spacing:-0.233px;color:#000;">5.1440</span>
<span class="t" style="left:688.90px;top:636.00px;font-size:12px;letter-spacing:-0.426px;color:#000;">search1|VOHGEI|24</span>
<span class="t" style="left:824.70px;top:636.00px;font-size:12px;letter-spacing:-0.613px;color:#000;">VOHGEI</span>
<span class="t" style="left:916.93px;top:636.00px;font-size:12px;letter-spacing:-0.100px;color:#000;">1</span>
<span class="t" style="left:978.93px;top:636.00px;font-size:12px;letter-spacing:-0.100px;color:#000;">2</span>
<span class="t" style="left:1004.54px;top:636.00px;font-size:12px;letter-spacing:-0.156px;color:#000;">-2.9360</span>
</body></html>
